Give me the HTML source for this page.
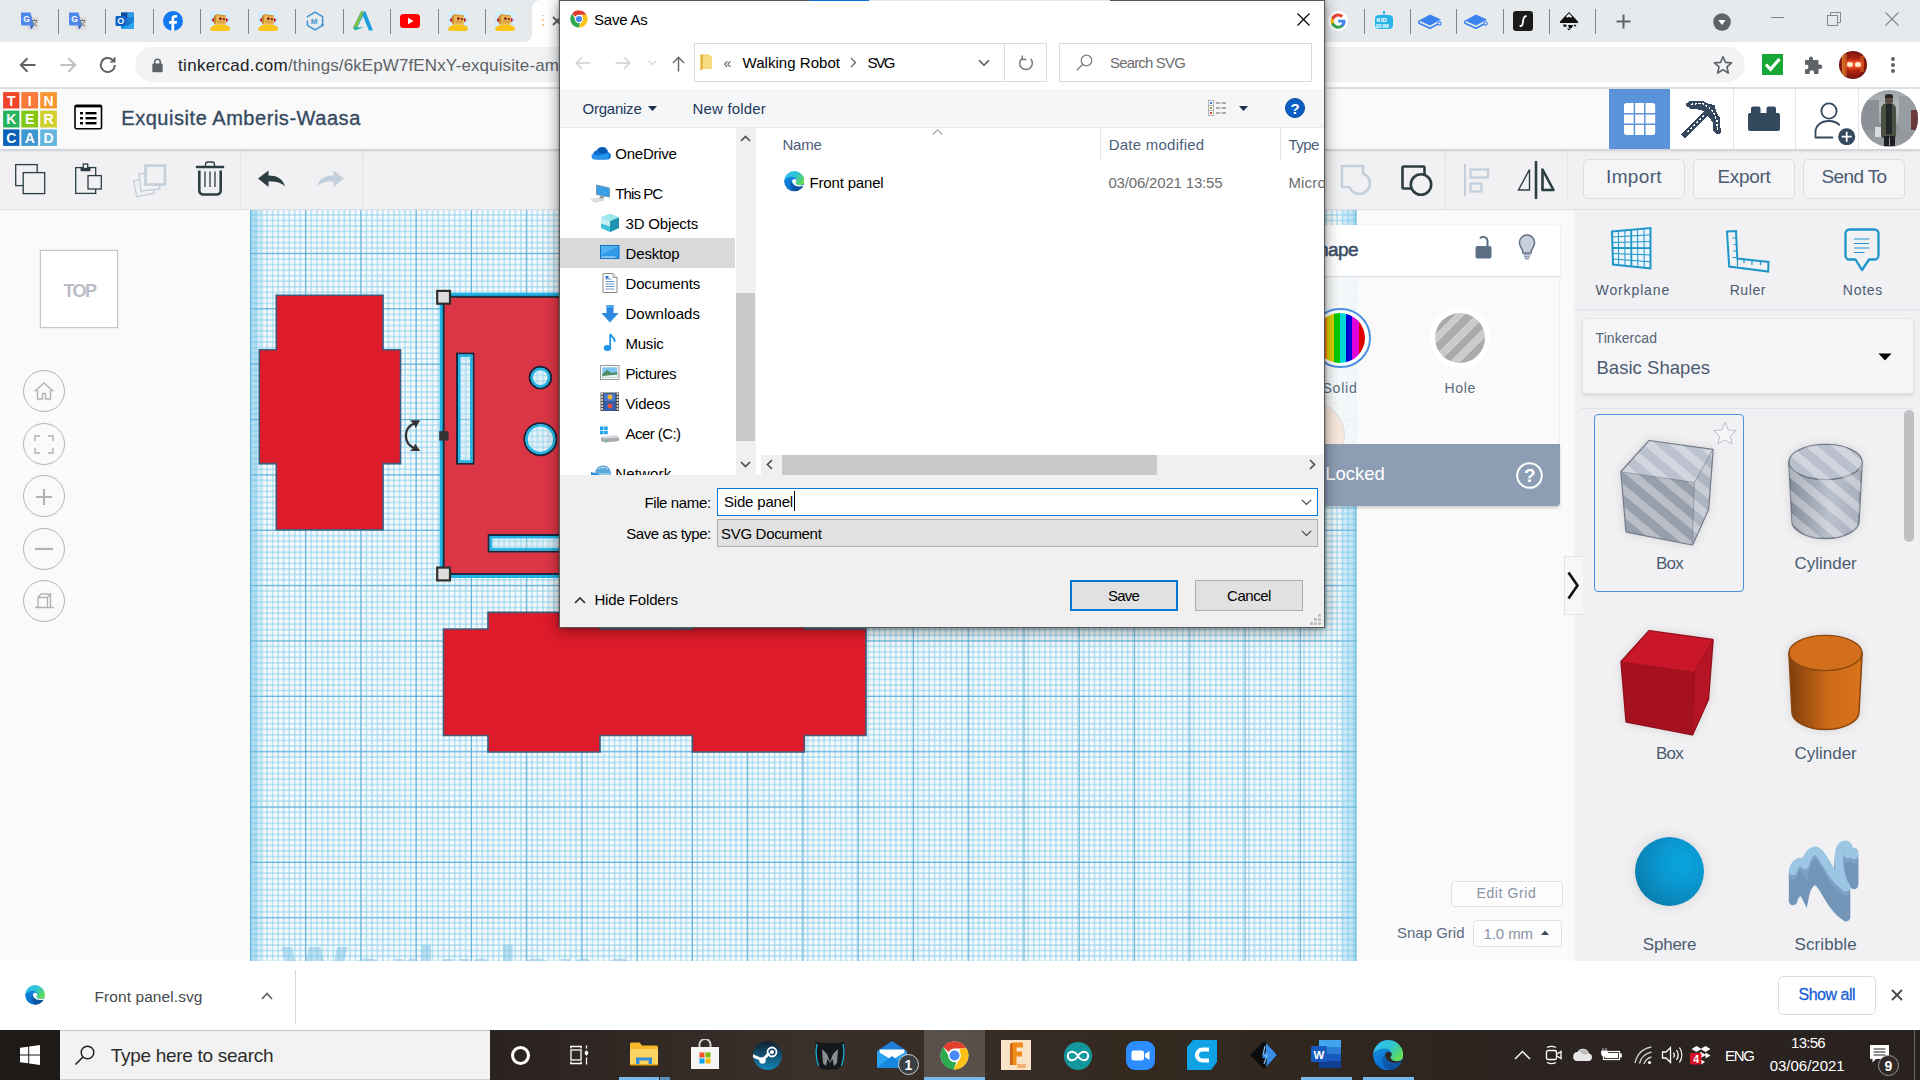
<!DOCTYPE html>
<html lang="en"><head><meta charset="utf-8"><title>Save As - Tinkercad</title>
<style>
html,body{margin:0;padding:0;}
body{width:1920px;height:1080px;overflow:hidden;position:relative;background:#fafafa;font-family:'Liberation Sans',sans-serif;}
.b{position:absolute;box-sizing:border-box;display:block;}
.t{position:absolute;white-space:pre;line-height:1;}
</style></head>
<body>
<div class="b" style="left:0px;top:210px;width:1920px;height:751px;background:#fafafa;"></div>
<div class="b" style="left:249.6px;top:209.5px;width:1107.4px;height:751.5px;background:#f6f8fa;overflow:hidden;"><div class="b" style="left:-3px;top:-3px;width:1113.4px;height:757.5px;background:linear-gradient(to right,rgba(70,155,202,.72) 0,rgba(70,155,202,.72) 1.3px,transparent 1.3px) 2.90px 0/55.275px 55.275px,linear-gradient(to bottom,rgba(70,155,202,.72) 0,rgba(70,155,202,.72) 1.3px,transparent 1.3px) 0 45.90px/55.38px 55.38px,linear-gradient(to right,rgba(125,205,236,.46) 0,rgba(125,205,236,.46) 1.7px,transparent 1.7px) 2.70px 0/5.5275px 5.5275px,linear-gradient(to bottom,rgba(125,205,236,.46) 0,rgba(125,205,236,.46) 1.7px,transparent 1.7px) 0 45.70px/5.538px 5.538px,#f6f8fa;filter:blur(.55px);"></div><div class="b" style="left:0;top:0;width:14px;height:100%;background:linear-gradient(to right,rgba(90,185,225,.55),rgba(120,200,235,.25) 70%,rgba(120,200,235,0))"></div><div class="b" style="left:1089.4px;top:0;width:18px;height:100%;background:linear-gradient(to left,rgba(110,195,230,.45),rgba(130,205,238,.3) 75%,rgba(130,205,238,0))"></div><span class="t" style="left:32px;top:727px;font-size:70px;font-weight:700;color:rgba(125,195,228,.5);">Workplane</span></div>
<svg class="b" style="left:0;top:0" width="1920" height="1080" viewBox="0 0 1920 1080"><g fill="#de1b2b" stroke="#3f5b7b" stroke-width="1.600" stroke-linejoin="miter"><path d="M276.300 295.300H383V349.700H400.500V463.600H383V529.700H276.300V463.600H259.300V349.700H276.300Z"/><path d="M443.500 629H488V612.400H600V629H692.400V612.400H804.400V629H866V735.500H804.400V752H692.400V735.500H600V752H488V735.500H443.500Z"/></g><g><rect x="441.600" y="294.800" width="142" height="281.200" fill="none" stroke="#22b4e6" stroke-width="4" style="filter:blur(.6px)"/><path fill-rule="evenodd" d="M443.900 297h140v276.800h-140zM457 353.600h16.500v110h-16.500zM488.700 535h120v16.500h-120zM551.200 377.600a10.800 10.800 0 1 0-21.600 0a10.800 10.800 0 1 0 21.600 0zM556.400 439.200a16 16 0 1 0-32 0a16 16 0 1 0 32 0z" fill="#dc3646"/><rect x="443.700" y="296.800" width="140" height="277.200" fill="none" stroke="#1d2f40" stroke-width="2"/><rect x="457" y="353.6" width="16.5" height="110" fill="rgba(190,225,240,.35)" stroke="#17293c" stroke-width="2"/><rect x="459.2" y="355.8" width="12.1" height="105.6" fill="none" stroke="#22b4e6" stroke-width="2.400"/><rect x="488.7" y="535" width="120" height="16.5" fill="rgba(190,225,240,.35)" stroke="#17293c" stroke-width="2"/><rect x="490.9" y="537.2" width="115.6" height="12.1" fill="none" stroke="#22b4e6" stroke-width="2.400"/><circle cx="540.4" cy="377.6" r="10.8" fill="rgba(190,225,240,.35)" stroke="#17293c" stroke-width="2"/><circle cx="540.4" cy="377.6" r="8.600000000000001" fill="none" stroke="#22b4e6" stroke-width="2.400"/><circle cx="540.4" cy="439.2" r="16" fill="rgba(190,225,240,.35)" stroke="#17293c" stroke-width="2"/><circle cx="540.4" cy="439.2" r="13.8" fill="none" stroke="#22b4e6" stroke-width="2.400"/></g><rect x="437.200" y="290.9" width="12.800" height="12.800" fill="#dedede" stroke="#2e2e2e" stroke-width="2.200"/><rect x="437.200" y="567.6" width="12.800" height="12.800" fill="#dedede" stroke="#2e2e2e" stroke-width="2.200"/><rect x="439.200" y="431.100" width="9.400" height="9.500" fill="#333"/><path d="M414.500 423.200c-11.500 5-11.500 20 0 25" fill="none" stroke="#333" stroke-width="2.300"/><path d="M410.200 420.300h10l-4.600 7.600-1.300-3.200z" fill="#333"/><path d="M410.200 451h10l-5.200-7.500-1 3.400z" fill="#333"/></svg>
<div class="b" style="left:40px;top:250px;width:78px;height:78px;background:#ffffff;border:1.500px solid #c6c6c9;box-shadow:0 0 2px rgba(0,0,0,.15);"></div>
<span class="t" style="left:63.50px;top:282px;font-size:18px;color:#b9bdc6;font-weight:700;letter-spacing:-1.562px;">TOP</span>
<div class="b" style="left:23px;top:370.3px;width:42px;height:42px;background:#fafafa;border:1px solid #b5b5b5;border-radius:50%;"></div>
<div class="b" style="left:23px;top:422.8px;width:42px;height:42px;background:#fafafa;border:1px solid #b5b5b5;border-radius:50%;"></div>
<div class="b" style="left:23px;top:475.3px;width:42px;height:42px;background:#fafafa;border:1px solid #b5b5b5;border-radius:50%;"></div>
<div class="b" style="left:23px;top:527.8px;width:42px;height:42px;background:#fafafa;border:1px solid #b5b5b5;border-radius:50%;"></div>
<div class="b" style="left:23px;top:580.2px;width:42px;height:42px;background:#fafafa;border:1px solid #b5b5b5;border-radius:50%;"></div>
<svg class="b" style="left:33px;top:381px;" width="22" height="20" viewBox="0 0 22 20"><path d="M1.500 10.500L11 2l9.500 8.500M4.500 9v9h5v-5.500h3V18h5V9" fill="none" stroke="#b3b3b3" stroke-width="1.400"/></svg>
<svg class="b" style="left:34px;top:434.5px;" width="20" height="19" viewBox="0 0 20 19"><path d="M1 6V1h5M14 1h5v5M19 13v5h-5M6 18H1v-5" fill="none" stroke="#b3b3b3" stroke-width="1.400"/></svg>
<svg class="b" style="left:35px;top:487.5px;" width="18" height="18" viewBox="0 0 18 18"><path d="M9 1v16M1 9h16" stroke="#b3b3b3" stroke-width="2.200"/></svg>
<svg class="b" style="left:35px;top:540px;" width="18" height="18" viewBox="0 0 18 18"><path d="M0 9h18" stroke="#b3b3b3" stroke-width="2.200"/></svg>
<svg class="b" style="left:33px;top:590px;" width="22" height="22" viewBox="0 0 22 22"><path d="M5 17V7.500l3-3.500h9.500v13M5 7.500h9.500l3-3.500M14.500 7.500V17M2 17.500h19" fill="none" stroke="#b3b3b3" stroke-width="1.400"/></svg>
<div class="b" style="left:1260px;top:224.8px;width:300px;height:52px;background:#ffffff;border-radius:4px 4px 0 0;border-bottom:1px solid #d5dde8;box-shadow:0 1px 3px rgba(0,0,0,.12);"></div>
<div class="b" style="left:1260px;top:277px;width:300px;height:167.5px;background:rgba(250,250,250,.9);border-right:1px solid #eceef2;"></div>
<span class="t" style="left:1306.00px;top:240px;font-size:19px;color:#3a4d63;letter-spacing:-0.591px;-webkit-text-stroke:.5px #3a4d63;">Shape</span>
<svg class="b" style="left:1474px;top:233px;" width="20" height="27" viewBox="0 0 20 27"><rect x="1.500" y="13" width="16" height="12.500" rx="2" fill="#5d6f85"/><path d="M13.500 13.500V8a4.200 4.200 0 0 0-7.500-2.500" fill="none" stroke="#5d6f85" stroke-width="2"/></svg>
<svg class="b" style="left:1516px;top:233px;" width="22" height="28" viewBox="0 0 22 28"><path d="M11 2a7.600 7.600 0 0 1 7.600 7.600c0 3.200-1.600 4.800-2.800 7-.500 1-.700 2.200-.800 3.400H7c-.100-1.200-.300-2.400-.800-3.400-1.200-2.200-2.800-3.800-2.800-7A7.600 7.600 0 0 1 11 2z" fill="#c9d0db" stroke="#5d6f85" stroke-width="1.500"/><path d="M7.500 21.700h7M8 23.800h6M9 25.800h4" stroke="#8f9db0" stroke-width="1.400"/></svg>
<div class="b" style="left:1310px;top:307.5px;width:60.6px;height:60.6px;background:#fff;border:2px solid #4a8fe0;border-radius:50%;"></div>
<div class="b" style="left:1315.3px;top:312.8px;width:50px;height:50px;border-radius:50%;background:linear-gradient(to right,#e00000 0.0%,#e00000 12.5%,#ff8c00 12.5%,#ff8c00 25.0%,#d8d000 25.0%,#d8d000 37.5%,#00c800 37.5%,#00c800 50.0%,#00d8d8 50.0%,#00d8d8 62.5%,#0000d8 62.5%,#0000d8 75.0%,#e000d8 75.0%,#e000d8 87.5%,#e00000 87.5%,#e00000 100.0%);"></div>
<div class="b" style="left:1429.3px;top:307px;width:61.4px;height:61.4px;background:#ffffff;border-radius:50%;"></div>
<div class="b" style="left:1435px;top:312.7px;width:50px;height:50px;border-radius:50%;background:repeating-linear-gradient(135deg,#cbcbcb 0,#cbcbcb 7.500px,#ababab 7.500px,#ababab 15px);"></div>
<span class="t" style="left:1322.50px;top:381px;font-size:14px;color:#5a6b80;letter-spacing:0.772px;">Solid</span>
<span class="t" style="left:1444.50px;top:381px;font-size:14px;color:#5a6b80;letter-spacing:0.676px;">Hole</span>
<div class="b" style="left:1276px;top:401px;width:69px;height:69px;background:rgba(246,226,212,.8);border-radius:50%;border:1px solid rgba(200,210,225,.6);"></div>
<div class="b" style="left:1260px;top:444.3px;width:300px;height:61.5px;background:#8d9eb4;border-radius:0 0 4px 4px;box-shadow:0 2px 3px rgba(0,0,0,.18);"></div>
<span class="t" style="left:1325.30px;top:465px;font-size:18.5px;color:#ffffff;letter-spacing:-0.026px;">Locked</span>
<svg class="b" style="left:1515px;top:461px;" width="29" height="29" viewBox="0 0 29 29"><circle cx="14.500" cy="14.500" r="12.300" fill="none" stroke="#fff" stroke-width="2"/></svg>
<span class="t" style="left:1524.00px;top:466px;font-size:19px;color:#fff;font-weight:700;">?</span>
<div class="b" style="left:1450.5px;top:880.5px;width:112px;height:26px;background:#fdfdfd;border:1px solid #dde2e9;border-radius:4px;"></div>
<span class="t" style="left:1476.50px;top:886px;font-size:14px;color:#8794a5;letter-spacing:0.615px;">Edit Grid</span>
<span class="t" style="left:1397.00px;top:925px;font-size:15px;color:#5a6b80;letter-spacing:-0.005px;">Snap Grid</span>
<div class="b" style="left:1473.4px;top:920.2px;width:89px;height:26.6px;background:#fdfdfd;border:1px solid #dde2e9;border-radius:4px;"></div>
<span class="t" style="left:1483.50px;top:926px;font-size:15px;color:#8794a5;letter-spacing:-0.086px;">1.0 mm</span>
<svg class="b" style="left:1540px;top:929px;" width="10" height="7" viewBox="0 0 10 7"><path d="M1 6l4-4.500L9 6z" fill="#3b4a5c"/></svg>
<div class="b" style="left:1575px;top:210px;width:345px;height:751px;background:#f1f1f4;box-shadow:0 0 2px rgba(0,0,0,.08);"></div>
<svg class="b" style="left:1610px;top:226px;" width="43" height="46" viewBox="0 0 43 46"><path d="M2 5.500L40.500 2v40.500L3 38.500z" fill="#eaf5fb" stroke="#1f95c8" stroke-width="2"/><path d="M8.4 4.9L8.6 39.2" stroke="#1f95c8" stroke-width="1"/><path d="M14.8 4.3L15.0 39.8" stroke="#1f95c8" stroke-width="1"/><path d="M21.2 3.8L21.4 40.5" stroke="#1f95c8" stroke-width="1.8"/><path d="M27.6 3.2L27.8 41.1" stroke="#1f95c8" stroke-width="1"/><path d="M34.0 2.6L34.2 41.8" stroke="#1f95c8" stroke-width="1"/><path d="M2.500 11.0L40.500 8.8" stroke="#1f95c8" stroke-width="1"/><path d="M2.500 16.5L40.500 15.5" stroke="#1f95c8" stroke-width="1"/><path d="M2.500 22.0L40.500 22.2" stroke="#1f95c8" stroke-width="1.8"/><path d="M2.500 27.5L40.500 29.0" stroke="#1f95c8" stroke-width="1"/><path d="M2.500 33.0L40.500 35.8" stroke="#1f95c8" stroke-width="1"/></svg>
<span class="t" style="left:1595.60px;top:283px;font-size:14px;color:#4b5b70;letter-spacing:0.870px;">Workplane</span>
<svg class="b" style="left:1725px;top:228px;" width="46" height="45" viewBox="0 0 46 45"><path d="M2 3.500l9-.500 1.300 27.500 31.200 3.500-.300 9.500L4.200 38.500z" fill="none" stroke="#1f95c8" stroke-width="2"/><path d="M7.500 10h3.500M8.500 16.500h3M8 23h3.500M7.500 29.500h4M19 31.500v3.500M27 32.500v4.500M35.500 33.500v3.500M12.500 31v7.500" stroke="#1f95c8" stroke-width="1.200"/></svg>
<span class="t" style="left:1729.70px;top:283px;font-size:14px;color:#4b5b70;letter-spacing:0.566px;">Ruler</span>
<svg class="b" style="left:1843px;top:227px;" width="38" height="46" viewBox="0 0 38 46"><path d="M6.500 2.500h25a4 4 0 0 1 4 4v22a4 4 0 0 1-4 4h-5.500l-7 10.500-6.500-10.500h-6a4 4 0 0 1-4-4v-22a4 4 0 0 1 4-4z" fill="none" stroke="#1f95c8" stroke-width="2.300" stroke-linejoin="round"/><path d="M11 12h15.500M11 16.500h15M11 21h15.500M11 25.500h10.500" stroke="#1f95c8" stroke-width="1.200"/></svg>
<span class="t" style="left:1842.80px;top:283px;font-size:14px;color:#4b5b70;letter-spacing:0.724px;">Notes</span>
<div class="b" style="left:1575px;top:308.5px;width:345px;height:1px;background:#dfe2e8;"></div>
<div class="b" style="left:1581.6px;top:317.5px;width:332px;height:76.6px;background:#f5f5f8;border:1px solid #e6e7ec;border-radius:4px;box-shadow:0 2px 3px rgba(0,0,0,.10);"></div>
<span class="t" style="left:1595.60px;top:331px;font-size:14px;color:#55657a;letter-spacing:0.050px;">Tinkercad</span>
<span class="t" style="left:1596.50px;top:359px;font-size:18.5px;color:#4b5b70;letter-spacing:0.031px;">Basic Shapes</span>
<svg class="b" style="left:1878px;top:353px;" width="14" height="8" viewBox="0 0 14 8"><path d="M0.500 0.500h13l-6.500 7z" fill="#000"/></svg>
<div class="b" style="left:1581px;top:408px;width:332px;height:1px;background:#dfe2e8;"></div>
<div class="b" style="left:1904.3px;top:409.5px;width:9.7px;height:132px;background:#bfbfc1;border-radius:5px;"></div>
<div class="b" style="left:1563.7px;top:556px;width:19.5px;height:58.5px;background:#f7f7f9;border:1px solid #e2e3e7;border-right:none;"></div>
<svg class="b" style="left:1566px;top:571px;" width="14" height="29" viewBox="0 0 14 29"><path d="M2.500 1.500L11.500 14.500 2.500 27.500" fill="none" stroke="#111" stroke-width="2.600"/></svg>
<div class="b" style="left:1594px;top:414px;width:149.7px;height:177.7px;background:#f1f1f4;border:1.500px solid #4a8fe0;border-radius:4px;"></div>
<svg class="b" style="left:1712px;top:421px;" width="26" height="25" viewBox="0 0 26 25"><path d="M13 1.500l3.300 7.400 8 .800-6 5.400 1.800 7.900L13 18.900 5.900 23l1.800-7.900-6-5.400 8-.800z" fill="#f6f6f9" stroke="#b9bec8" stroke-width="1"/></svg>
<svg class="b" style="left:1600px;top:420px;filter:drop-shadow(0 0 5px rgba(0,0,0,.12));" width="130" height="140" viewBox="0 0 130 140"><defs><pattern id="st1" width="17" height="17" patternUnits="userSpaceOnUse" patternTransform="rotate(40)"><rect width="17" height="17" fill="#fff" fill-opacity="0"/><rect width="17" height="8" fill="#fff" fill-opacity=".33"/></pattern></defs><polygon points="49.3,21.1 112.6,30.0 108.0,89.3 92.2,124.4 26.5,111.5 21.5,51.9" fill="#727986" stroke="#727986" stroke-width="2.400" stroke-linejoin="round"/><polygon points="49.3,21.1 112.6,30.0 94.4,62.4 21.5,51.9" fill="#bcc2cf"/><polygon points="21.5,51.9 94.4,62.4 92.2,124.4 26.5,111.5" fill="#979eac"/><polygon points="94.4,62.4 112.6,30.0 108.0,89.3 92.2,124.4" fill="#adb4c2"/><polygon points="49.3,21.1 112.6,30.0 108.0,89.3 92.2,124.4 26.5,111.5 21.5,51.9" fill="url(#st1)"/><polyline points="21.5,51.9 94.4,62.4 112.6,30.0" fill="none" stroke="#727986" stroke-width=".700" stroke-opacity=".7"/><polyline points="94.4,62.4 92.2,124.4" fill="none" stroke="#727986" stroke-width=".700" stroke-opacity=".7"/></svg>
<svg class="b" style="left:1760px;top:420px;filter:drop-shadow(0 0 5px rgba(0,0,0,.12));" width="130" height="140" viewBox="0 0 130 140"><defs><linearGradient id="cg1" x1="0" x2="1" y1="0" y2="0"><stop offset="0" stop-color="#848b98"/><stop offset=".55" stop-color="#bac0cd"/><stop offset="1" stop-color="#a8aebb"/></linearGradient><pattern id="cs1" width="17" height="17" patternUnits="userSpaceOnUse" patternTransform="rotate(40)"><rect width="17" height="8" fill="#fff" fill-opacity=".33"/></pattern></defs><path d="M28.9 42 L32.0 101 A33.500 17.500 0 0 0 99.0 101 L102.1 42 Z" fill="url(#cg1)" stroke="#727986" stroke-width="1.600"/><ellipse cx="65.5" cy="42" rx="36.600" ry="17.600" fill="#bac0cd" stroke="#727986" stroke-width="1.400"/><path d="M28.9 42 A36.600 17.600 0 0 1 102.1 42 L99.0 101 A33.500 17.500 0 0 1 32.0 101 Z" fill="url(#cs1)"/></svg>
<span class="t" style="left:1656.00px;top:555px;font-size:17px;color:#4b5b70;letter-spacing:-0.766px;">Box</span>
<span class="t" style="left:1794.60px;top:555px;font-size:17px;color:#4b5b70;letter-spacing:-0.032px;">Cylinder</span>
<svg class="b" style="left:1600px;top:610px;filter:drop-shadow(0 0 5px rgba(0,0,0,.12));" width="130" height="140" viewBox="0 0 130 140"><polygon points="49.3,21.1 112.6,30.0 108.0,89.3 92.2,124.4 26.5,111.5 21.5,51.9" fill="#8f0f1b" stroke="#8f0f1b" stroke-width="2.400" stroke-linejoin="round"/><polygon points="49.3,21.1 112.6,30.0 94.4,62.4 21.5,51.9" fill="#c91628"/><polygon points="21.5,51.9 94.4,62.4 92.2,124.4 26.5,111.5" fill="#a5111f"/><polygon points="94.4,62.4 112.6,30.0 108.0,89.3 92.2,124.4" fill="#b51424"/><polyline points="21.5,51.9 94.4,62.4 112.6,30.0" fill="none" stroke="#8f0f1b" stroke-width=".700" stroke-opacity=".7"/><polyline points="94.4,62.4 92.2,124.4" fill="none" stroke="#8f0f1b" stroke-width=".700" stroke-opacity=".7"/></svg>
<svg class="b" style="left:1760px;top:611px;filter:drop-shadow(0 0 5px rgba(0,0,0,.12));" width="130" height="140" viewBox="0 0 130 140"><defs><linearGradient id="cg2" x1="0" x2="1" y1="0" y2="0"><stop offset="0" stop-color="#7d3e0c"/><stop offset=".55" stop-color="#cf6a18"/><stop offset="1" stop-color="#d9741c"/></linearGradient></defs><path d="M28.9 42 L32.0 101 A33.500 17.500 0 0 0 99.0 101 L102.1 42 Z" fill="url(#cg2)" stroke="#8a470f" stroke-width="1.600"/><ellipse cx="65.5" cy="42" rx="36.600" ry="17.600" fill="#d36f1c" stroke="#8a470f" stroke-width="1.400"/></svg>
<span class="t" style="left:1656.00px;top:745px;font-size:17px;color:#4b5b70;letter-spacing:-0.766px;">Box</span>
<span class="t" style="left:1794.60px;top:745px;font-size:17px;color:#4b5b70;letter-spacing:-0.032px;">Cylinder</span>
<div class="b" style="left:1634.5px;top:836.6px;width:69.8px;height:69.8px;border-radius:50%;background:radial-gradient(circle at 68% 38%,#0aa5de 0%,#0a98d0 35%,#0b86b8 65%,#0a6f99 100%);box-shadow:0 0 14px rgba(0,0,0,.12);"></div>
<span class="t" style="left:1642.80px;top:936px;font-size:17px;color:#4b5b70;letter-spacing:-0.221px;">Sphere</span>
<svg class="b" style="left:1780px;top:835px;" width="90" height="95" viewBox="0 0 90 95"><g transform="translate(0 30)" fill="none" stroke="#7396b8" stroke-width="8.500" stroke-linecap="round"><path d="M13 36C15 27,22 24,25 30C27 20,33 13,38 17C45 22,50 42,66 52"/><path d="M66 52C58 40,56 12,64 10C68 9,70 14,68 19M74 17v3"/></g><g transform="translate(0 28)" fill="none" stroke="#7396b8" stroke-width="8.500" stroke-linecap="round"><path d="M13 36C15 27,22 24,25 30C27 20,33 13,38 17C45 22,50 42,66 52"/><path d="M66 52C58 40,56 12,64 10C68 9,70 14,68 19M74 17v3"/></g><g transform="translate(0 26)" fill="none" stroke="#7396b8" stroke-width="8.500" stroke-linecap="round"><path d="M13 36C15 27,22 24,25 30C27 20,33 13,38 17C45 22,50 42,66 52"/><path d="M66 52C58 40,56 12,64 10C68 9,70 14,68 19M74 17v3"/></g><g transform="translate(0 24)" fill="none" stroke="#7396b8" stroke-width="8.500" stroke-linecap="round"><path d="M13 36C15 27,22 24,25 30C27 20,33 13,38 17C45 22,50 42,66 52"/><path d="M66 52C58 40,56 12,64 10C68 9,70 14,68 19M74 17v3"/></g><g transform="translate(0 22)" fill="none" stroke="#7396b8" stroke-width="8.500" stroke-linecap="round"><path d="M13 36C15 27,22 24,25 30C27 20,33 13,38 17C45 22,50 42,66 52"/><path d="M66 52C58 40,56 12,64 10C68 9,70 14,68 19M74 17v3"/></g><g transform="translate(0 20)" fill="none" stroke="#7396b8" stroke-width="8.500" stroke-linecap="round"><path d="M13 36C15 27,22 24,25 30C27 20,33 13,38 17C45 22,50 42,66 52"/><path d="M66 52C58 40,56 12,64 10C68 9,70 14,68 19M74 17v3"/></g><g transform="translate(0 18)" fill="none" stroke="#7396b8" stroke-width="8.500" stroke-linecap="round"><path d="M13 36C15 27,22 24,25 30C27 20,33 13,38 17C45 22,50 42,66 52"/><path d="M66 52C58 40,56 12,64 10C68 9,70 14,68 19M74 17v3"/></g><g transform="translate(0 16)" fill="none" stroke="#7396b8" stroke-width="8.500" stroke-linecap="round"><path d="M13 36C15 27,22 24,25 30C27 20,33 13,38 17C45 22,50 42,66 52"/><path d="M66 52C58 40,56 12,64 10C68 9,70 14,68 19M74 17v3"/></g><g transform="translate(0 14)" fill="none" stroke="#7396b8" stroke-width="8.500" stroke-linecap="round"><path d="M13 36C15 27,22 24,25 30C27 20,33 13,38 17C45 22,50 42,66 52"/><path d="M66 52C58 40,56 12,64 10C68 9,70 14,68 19M74 17v3"/></g><g transform="translate(0 12)" fill="none" stroke="#7396b8" stroke-width="8.500" stroke-linecap="round"><path d="M13 36C15 27,22 24,25 30C27 20,33 13,38 17C45 22,50 42,66 52"/><path d="M66 52C58 40,56 12,64 10C68 9,70 14,68 19M74 17v3"/></g><g transform="translate(0 10)" fill="none" stroke="#7396b8" stroke-width="8.500" stroke-linecap="round"><path d="M13 36C15 27,22 24,25 30C27 20,33 13,38 17C45 22,50 42,66 52"/><path d="M66 52C58 40,56 12,64 10C68 9,70 14,68 19M74 17v3"/></g><g transform="translate(0 8)" fill="none" stroke="#7396b8" stroke-width="8.500" stroke-linecap="round"><path d="M13 36C15 27,22 24,25 30C27 20,33 13,38 17C45 22,50 42,66 52"/><path d="M66 52C58 40,56 12,64 10C68 9,70 14,68 19M74 17v3"/></g><g transform="translate(0 6)" fill="none" stroke="#7396b8" stroke-width="8.500" stroke-linecap="round"><path d="M13 36C15 27,22 24,25 30C27 20,33 13,38 17C45 22,50 42,66 52"/><path d="M66 52C58 40,56 12,64 10C68 9,70 14,68 19M74 17v3"/></g><g transform="translate(0 4)" fill="none" stroke="#7da2c4" stroke-width="8.500" stroke-linecap="round"><path d="M13 36C15 27,22 24,25 30C27 20,33 13,38 17C45 22,50 42,66 52"/><path d="M66 52C58 40,56 12,64 10C68 9,70 14,68 19M74 17v3"/></g><g transform="translate(0 2)" fill="none" stroke="#7da2c4" stroke-width="8.500" stroke-linecap="round"><path d="M13 36C15 27,22 24,25 30C27 20,33 13,38 17C45 22,50 42,66 52"/><path d="M66 52C58 40,56 12,64 10C68 9,70 14,68 19M74 17v3"/></g><g fill="none" stroke="#9dc5e4" stroke-width="8.500" stroke-linecap="round" stroke-linejoin="round"><path d="M13 36C15 27,22 24,25 30C27 20,33 13,38 17C45 22,50 42,66 52"/><path d="M66 52C58 40,56 12,64 10C68 9,70 14,68 19M74 17v3"/></g></svg>
<span class="t" style="left:1794.60px;top:936px;font-size:17px;color:#4b5b70;letter-spacing:0.085px;">Scribble</span>
<div class="b" style="left:0px;top:150px;width:1920px;height:60px;background:#f1f1f4;border-bottom:1px solid #dddfe4;"></div>
<svg class="b" style="left:14px;top:163px;" width="32" height="32" viewBox="0 0 32 32"><rect x="1.700" y="1.600" width="21.500" height="21" fill="#f1f1f4" stroke="#2c3e42" stroke-width="1.300"/><rect x="9.200" y="9.600" width="21.500" height="21" fill="#f1f1f4" stroke="#2c3e42" stroke-width="1.300"/></svg>
<svg class="b" style="left:74px;top:162px;" width="30" height="33" viewBox="0 0 30 33"><rect x="1.700" y="5.600" width="20" height="25.800" fill="#f1f1f4" stroke="#2c3e42" stroke-width="1.300"/><path d="M6.500 5.500h10v2.800a1 1 0 0 1-1 1h-8a1 1 0 0 1-1-1z" fill="#2c3e42"/><rect x="9.300" y="2" width="4.400" height="4.500" fill="#f1f1f4" stroke="#2c3e42" stroke-width="1.300"/><rect x="14" y="13.600" width="13.300" height="13.400" fill="#f1f1f4" stroke="#2c3e42" stroke-width="1.300"/></svg>
<svg class="b" style="left:132px;top:162px;" width="36" height="36" viewBox="0 0 36 36"><g fill="#f1f1f4" stroke="#c3cfdb"><rect x="3" y="17" width="18" height="16" stroke-width="1.200" transform="rotate(-12 12 25)"/><rect x="8" y="11" width="19" height="17" stroke-width="1.400" transform="rotate(-6 17 20)"/><rect x="13.500" y="3.500" width="19.500" height="19" stroke-width="2.600"/></g></svg>
<svg class="b" style="left:195px;top:160px;" width="30" height="37" viewBox="0 0 30 37"><path d="M2 7h26" stroke="#2c3e42" stroke-width="2.600" stroke-linecap="round"/><path d="M10.500 6V4.500a2.500 2.500 0 0 1 2.500-2.500h4a2.500 2.500 0 0 1 2.500 2.500V6" stroke="#2c3e42" stroke-width="1.300" fill="none"/><path d="M4.300 10.500v20a4 4 0 0 0 4 4h13.400a4 4 0 0 0 4-4v-20" stroke="#2c3e42" stroke-width="2.600" fill="none"/><path d="M10 11.500v15.500M15 11.500v15.500M20 11.500v15.500" stroke="#2c3e42" stroke-width="1.300"/></svg>
<div class="b" style="left:240px;top:150px;width:1px;height:59px;background:#e3e4e8;"></div>
<svg class="b" style="left:256px;top:168px;" width="31" height="22" viewBox="0 0 31 22"><path d="M2 10.500L12.500 2.500v5c8 0 14.500 3 16.500 11-3.500-4-9-5.500-16.500-5v5.500z" fill="#2c3e42"/></svg>
<svg class="b" style="left:315px;top:168px;" width="31" height="22" viewBox="0 0 31 22"><path d="M29 10.500L18.500 2.500v5c-8 0-14.500 3-16.500 11 3.500-4 9-5.500 16.500-5v5.500z" fill="#c3cfdb"/></svg>
<div class="b" style="left:362px;top:150px;width:1px;height:59px;background:#e3e4e8;"></div>
<svg class="b" style="left:1339px;top:164px;" width="34" height="32" viewBox="0 0 34 32"><path d="M3 2h21v7.500a10.500 10.500 0 1 1-13.500 13.500H3z" fill="none" stroke="#c3cfdb" stroke-width="2.600" stroke-linejoin="round"/></svg>
<svg class="b" style="left:1400px;top:164px;" width="34" height="32" viewBox="0 0 34 32"><rect x="2.500" y="2.500" width="22" height="22" rx="1" fill="none" stroke="#2c3e42" stroke-width="2.600"/><circle cx="21" cy="20.500" r="10.200" fill="#f1f1f4" stroke="#2c3e42" stroke-width="2.600"/></svg>
<div class="b" style="left:1445px;top:150px;width:1px;height:59px;background:#e3e4e8;"></div>
<svg class="b" style="left:1463px;top:164px;" width="28" height="32" viewBox="0 0 28 32"><path d="M2 0v32" stroke="#c3cfdb" stroke-width="2.200"/><rect x="7.500" y="5.500" width="17.500" height="8" fill="none" stroke="#c3cfdb" stroke-width="2.200"/><rect x="7.500" y="19.500" width="11" height="8" fill="none" stroke="#c3cfdb" stroke-width="2.200"/></svg>
<svg class="b" style="left:1516px;top:161px;" width="40" height="38" viewBox="0 0 40 38"><path d="M20 1v36" stroke="#2c3e42" stroke-width="2.600" stroke-linecap="round"/><path d="M13.500 8.500v20.500H2.500z" fill="none" stroke="#2c3e42" stroke-width="1.400"/><path d="M26.500 8.500v20.500h11z" fill="none" stroke="#2c3e42" stroke-width="2.600" stroke-linejoin="round"/></svg>
<div class="b" style="left:1566.5px;top:150px;width:1px;height:48px;background:#e3e4e8;"></div>
<div class="b" style="left:1583.0px;top:159px;width:101.5px;height:39.5px;background:#f5f5f8;border:1px solid #dcdde2;border-radius:5px;"></div>
<span class="t" style="left:1606.00px;top:167px;font-size:19px;color:#4b5b70;letter-spacing:0.357px;">Import</span>
<div class="b" style="left:1693.0px;top:159px;width:101.5px;height:39.5px;background:#f5f5f8;border:1px solid #dcdde2;border-radius:5px;"></div>
<span class="t" style="left:1717.50px;top:167px;font-size:19px;color:#4b5b70;letter-spacing:-0.320px;">Export</span>
<div class="b" style="left:1803.0px;top:159px;width:101.5px;height:39.5px;background:#f5f5f8;border:1px solid #dcdde2;border-radius:5px;"></div>
<span class="t" style="left:1821.50px;top:167px;font-size:19px;color:#4b5b70;letter-spacing:-0.627px;">Send To</span>
<div class="b" style="left:0px;top:89px;width:1920px;height:60px;background:#fafafb;box-shadow:0 1px 3px rgba(60,70,90,.35);"></div>
<svg class="b" style="left:0px;top:89px;" width="60" height="60" viewBox="0 0 60 60"><rect x="3.1" y="3.1" width="16.3" height="16.4" fill="#f0452a"/><rect x="21.3" y="3.1" width="16.8" height="16.4" fill="#f6793a"/><rect x="40.2" y="3.1" width="16.7" height="16.4" fill="#f7962f"/><rect x="3.1" y="21.6" width="16.3" height="16.9" fill="#27b35c"/><rect x="21.3" y="21.6" width="16.8" height="16.9" fill="#85c814"/><rect x="40.2" y="21.6" width="16.7" height="16.9" fill="#d0cf2f"/><rect x="3.1" y="40.4" width="16.3" height="16.5" fill="#0a5fb7"/><rect x="21.3" y="40.4" width="16.8" height="16.5" fill="#3f97cf"/><rect x="40.2" y="40.4" width="16.7" height="16.5" fill="#64b5e0"/></svg>
<span class="t" style="left:3.10px;top:94px;width:16.3px;text-align:center;font-size:14px;font-weight:700;color:#fff;">T</span>
<span class="t" style="left:21.30px;top:94px;width:16.8px;text-align:center;font-size:14px;font-weight:700;color:#fff;">I</span>
<span class="t" style="left:40.20px;top:94px;width:16.7px;text-align:center;font-size:14px;font-weight:700;color:#fff;">N</span>
<span class="t" style="left:3.10px;top:112px;width:16.3px;text-align:center;font-size:14px;font-weight:700;color:#fff;">K</span>
<span class="t" style="left:21.30px;top:112px;width:16.8px;text-align:center;font-size:14px;font-weight:700;color:#fff;">E</span>
<span class="t" style="left:40.20px;top:112px;width:16.7px;text-align:center;font-size:14px;font-weight:700;color:#fff;">R</span>
<span class="t" style="left:3.10px;top:131px;width:16.3px;text-align:center;font-size:14px;font-weight:700;color:#fff;">C</span>
<span class="t" style="left:21.30px;top:131px;width:16.8px;text-align:center;font-size:14px;font-weight:700;color:#fff;">A</span>
<span class="t" style="left:40.20px;top:131px;width:16.7px;text-align:center;font-size:14px;font-weight:700;color:#fff;">D</span>
<svg class="b" style="left:74px;top:104px;" width="29" height="26" viewBox="0 0 29 26"><rect x="1" y="1.200" width="26.500" height="23.500" rx="1.500" fill="#fff" stroke="#000" stroke-width="1.600"/><rect x="1" y="1.200" width="26.500" height="2.200" fill="#000"/><rect x="6" y="8" width="3" height="2.400" fill="#000"/><rect x="11.500" y="8" width="11" height="2.400" fill="#000"/><rect x="6" y="13" width="3" height="2.400" fill="#000"/><rect x="11.500" y="13" width="11" height="2.400" fill="#000"/><rect x="6" y="18" width="3" height="2.400" fill="#000"/><rect x="11.500" y="18" width="11" height="2.400" fill="#000"/></svg>
<span class="t" style="left:121.30px;top:108px;font-size:20px;color:#34495e;letter-spacing:0.538px;-webkit-text-stroke:0.35px #34495e;">Exquisite Amberis-Waasa</span>
<div class="b" style="left:1609px;top:89px;width:61px;height:60px;background:#5a93d9;"></div>
<svg class="b" style="left:1623.8px;top:103px;" width="32" height="32" viewBox="0 0 32 32"><rect x="0" y="0" width="31.200" height="32" rx="2.800" fill="#fff"/><path d="M10.400 0v32M20.800 0v32M0 10.700h32M0 21.300h32" stroke="#5a93d9" stroke-width="1.500"/></svg>
<div class="b" style="left:1670px;top:89px;width:63px;height:60px;background:#ffffff;"></div>
<div class="b" style="left:1733px;top:89px;width:1px;height:60px;background:#e4e6ea;"></div>
<div class="b" style="left:1734px;top:89px;width:61px;height:60px;background:#ffffff;"></div>
<div class="b" style="left:1795px;top:89px;width:1px;height:60px;background:#e4e6ea;"></div>
<div class="b" style="left:1796px;top:89px;width:62px;height:60px;background:#ffffff;"></div>
<div class="b" style="left:1858px;top:89px;width:1px;height:60px;background:#e4e6ea;"></div>
<div class="b" style="left:1859px;top:89px;width:61px;height:60px;background:#ffffff;"></div>
<svg class="b" style="left:1680px;top:98.3px;shape-rendering:crispEdges;" width="44" height="42" viewBox="0 0 44 42"><polygon points="5.8,5.8 10.8,2.5 21.7,2.5 26.7,5.0 35.0,7.5 35.8,13.3 40.0,20.0 40.8,35.0 36.7,36.7 33.3,33.3 33.3,25.0 28.3,18.3 23.3,13.3 20.0,11.7 10.8,10.8 6.7,8.3" fill="#34495e"/><polyline points="10.8,6.3 21.7,5.3 29.2,9.2 33.3,14.2 37.0,22.5 37.3,33.3" fill="none" stroke="#fff" stroke-width="1.300" stroke-dasharray="2.200 1.600"/><path d="M5.200 36.500L27 14.800" stroke="#34495e" stroke-width="5.400" stroke-linecap="square"/><path d="M7.500 34.200L25 16.800" stroke="#fff" stroke-width="1.300" stroke-dasharray="2.200 2"/></svg>
<svg class="b" style="left:1747px;top:105.3px;" width="35" height="27" viewBox="0 0 35 27"><path d="M4 8V3.500a2 2 0 0 1 2-2h5.500a2 2 0 0 1 2 2V8h6V3.500a2 2 0 0 1 2-2H27a2 2 0 0 1 2 2V8h2a2 2 0 0 1 2 2v14a2 2 0 0 1-2 2H3a2 2 0 0 1-2-2V10a2 2 0 0 1 2-2z" fill="#34495e"/></svg>
<svg class="b" style="left:1811.5px;top:99px;" width="44" height="46" viewBox="0 0 44 46"><circle cx="17" cy="12" r="7.600" fill="none" stroke="#34495e" stroke-width="1.800"/><path d="M3.500 38.500v-5.500c0-6 5-11 13.500-11 4.500 0 8 1.500 10.300 3.800M3.500 38.500h17" fill="none" stroke="#34495e" stroke-width="1.800" stroke-linecap="round"/><circle cx="34.700" cy="37.700" r="8.500" fill="#34495e"/><path d="M34.700 32.700v10M29.700 37.700h10" stroke="#fff" stroke-width="1.800"/></svg>
<div class="b" style="left:1860.8px;top:89.6px;width:57.4px;height:57.4px;background:linear-gradient(to bottom,#9ea4a9 0%,#b4b9bd 30%,#a3a8ac 55%,#8d9297 62%,#9b9fa3 100%);border-radius:50%;overflow:hidden;"><div class="b" style="left:0;top:10px;width:18px;height:30px;background:#8a9096"></div><div class="b" style="left:38px;top:6px;width:20px;height:36px;background:#969ca1"></div><div class="b" style="left:50px;top:20px;width:8px;height:20px;background:#6b3a3a"></div><div class="b" style="left:20.500px;top:13px;width:15px;height:35px;background:#4c5042;border-radius:6px 6px 3px 3px"></div><div class="b" style="left:25px;top:14px;width:6px;height:30px;background:#23262a"></div><div class="b" style="left:24.500px;top:5.500px;width:7.500px;height:9px;background:#5b4a40;border-radius:45%"></div><div class="b" style="left:24px;top:4.500px;width:8.500px;height:4px;background:#2a2422;border-radius:50% 50% 0 0"></div><div class="b" style="left:23.500px;top:46px;width:4.500px;height:10px;background:#1d1f23"></div><div class="b" style="left:29.500px;top:46px;width:4.500px;height:10px;background:#1d1f23"></div><div class="b" style="left:14px;top:37px;width:6px;height:10px;background:#d9dbdd"></div></div>
<div class="b" style="left:0px;top:0px;width:1920px;height:42px;background:#e7eaed;"></div>
<svg class="b" style="left:522.5px;top:0" width="60" height="42" viewBox="0 0 60 42"><path d="M0 42c6 0 9-3 9-9V9c0-5 3.500-9 9-9h42v42z" fill="#fff"/></svg>
<div class="b" style="left:58px;top:9px;width:1px;height:25px;background:#80868b;"></div>
<div class="b" style="left:105px;top:9px;width:1px;height:25px;background:#80868b;"></div>
<div class="b" style="left:153px;top:9px;width:1px;height:25px;background:#80868b;"></div>
<div class="b" style="left:200px;top:9px;width:1px;height:25px;background:#80868b;"></div>
<div class="b" style="left:248px;top:9px;width:1px;height:25px;background:#80868b;"></div>
<div class="b" style="left:295px;top:9px;width:1px;height:25px;background:#80868b;"></div>
<div class="b" style="left:343px;top:9px;width:1px;height:25px;background:#80868b;"></div>
<div class="b" style="left:390px;top:9px;width:1px;height:25px;background:#80868b;"></div>
<div class="b" style="left:438px;top:9px;width:1px;height:25px;background:#80868b;"></div>
<div class="b" style="left:485px;top:9px;width:1px;height:25px;background:#80868b;"></div>
<div class="b" style="left:1364px;top:9px;width:1px;height:25px;background:#80868b;"></div>
<div class="b" style="left:1410px;top:9px;width:1px;height:25px;background:#80868b;"></div>
<div class="b" style="left:1456px;top:9px;width:1px;height:25px;background:#80868b;"></div>
<div class="b" style="left:1503px;top:9px;width:1px;height:25px;background:#80868b;"></div>
<div class="b" style="left:1549px;top:9px;width:1px;height:25px;background:#80868b;"></div>
<div class="b" style="left:1595px;top:9px;width:1px;height:25px;background:#80868b;"></div>
<svg class="b" style="left:19.6px;top:11px;" width="20" height="20" viewBox="0 0 20 20"><rect x="7" y="6" width="12" height="13" rx="1.5" fill="#dcdcdc"/>
<path d="M1 1.5h9.5l3.5 13H2.5A1.5 1.5 0 0 1 1 13z" fill="#4f86ec"/>
<path d="M10 14.5h4l-3 4z" fill="#3a5bbf"/>
<text x="3.2" y="11" font-family="Liberation Sans,sans-serif" font-size="8.5" font-weight="700" fill="#fff">G</text>
<path d="M12 9.5h5.5M14.7 8.3v1.2M13 11c.8 2 2.2 3.2 4 4M16.5 9.7c-.5 2.3-1.8 4-3.7 5.2" stroke="#6b6b6b" stroke-width=".9" fill="none"/></svg>
<svg class="b" style="left:67.7px;top:11px;" width="20" height="20" viewBox="0 0 20 20"><rect x="7" y="6" width="12" height="13" rx="1.5" fill="#dcdcdc"/>
<path d="M1 1.5h9.5l3.5 13H2.5A1.5 1.5 0 0 1 1 13z" fill="#4f86ec"/>
<path d="M10 14.5h4l-3 4z" fill="#3a5bbf"/>
<text x="3.2" y="11" font-family="Liberation Sans,sans-serif" font-size="8.5" font-weight="700" fill="#fff">G</text>
<path d="M12 9.5h5.5M14.7 8.3v1.2M13 11c.8 2 2.2 3.2 4 4M16.5 9.7c-.5 2.3-1.8 4-3.7 5.2" stroke="#6b6b6b" stroke-width=".9" fill="none"/></svg>
<svg class="b" style="left:114.8px;top:11px;" width="20" height="20" viewBox="0 0 20 20"><rect x="6" y="1.5" width="13" height="15" rx="1" fill="#1a6fc9"/>
<rect x="6" y="1.5" width="6.5" height="5" fill="#0f4f9e"/><rect x="12.5" y="1.5" width="6.5" height="5" fill="#2f9be8"/>
<rect x="12.5" y="6.5" width="6.5" height="5" fill="#1d7fd6"/>
<path d="M6 10l7 5 6-4.5V17a1 1 0 0 1-1 1H7a1 1 0 0 1-1-1z" fill="#1492e6"/>
<path d="M19 10.5V17a1 1 0 0 1-1 1H8z" fill="#2aa7f0"/>
<rect x="0.5" y="5" width="10" height="10" rx="1" fill="#0a63c4"/>
<text x="2.3" y="13.3" font-family="Liberation Sans,sans-serif" font-size="9" font-weight="700" fill="#fff">O</text></svg>
<svg class="b" style="left:163px;top:11px;" width="20" height="20" viewBox="0 0 20 20"><circle cx="10" cy="10" r="10" fill="#1278f2"/>
<path d="M11.2 20v-7.2h2.4l.45-2.9H11.2V8.1c0-.85.3-1.5 1.6-1.5h1.4V4.1c-.3-.05-1.15-.15-2.15-.15-2.2 0-3.6 1.3-3.6 3.7v2.25H6v2.9h2.45V20z" fill="#fff"/></svg>
<svg class="b" style="left:210px;top:11px;" width="20" height="20" viewBox="0 0 20 20"><rect x="0" y="0" width="20" height="20" rx="2.600" fill="#d4eefb"/>
<path d="M0.300 9h3M17 9h2.700" stroke="#a9b5bd" stroke-width=".9"/>
<ellipse cx="3.300" cy="9" rx="1.100" ry="2.100" fill="#c4161c"/><ellipse cx="16.600" cy="9" rx="1" ry="2.100" fill="#c4161c"/>
<path d="M3.600 5.600L6 3.300V13.700L4.200 13z" fill="#c48a32"/>
<path d="M6 3.300l9.800 1.200v9.300H6z" fill="#eab552"/>
<path d="M6 3.300l9.800 1.200v.9L6 4.300z" fill="#c9952f"/>
<circle cx="10.400" cy="7.700" r="1.350" fill="#8e1b1b"/><circle cx="13.900" cy="8.200" r="1.150" fill="#8e1b1b"/>
<path d="M7.600 10.600l6.600.500" stroke="#b5832f" stroke-width=".8"/>
<path d="M0.100 17.300C2 14.500 6 13.600 10 13.600c5 0 9 1.400 9.900 3v1.400a2 2 0 0 1-2 2H2.100a2 2 0 0 1-2-2z" fill="#fcc419"/></svg>
<svg class="b" style="left:258px;top:11px;" width="20" height="20" viewBox="0 0 20 20"><rect x="0" y="0" width="20" height="20" rx="2.600" fill="#d4eefb"/>
<path d="M0.300 9h3M17 9h2.700" stroke="#a9b5bd" stroke-width=".9"/>
<ellipse cx="3.300" cy="9" rx="1.100" ry="2.100" fill="#c4161c"/><ellipse cx="16.600" cy="9" rx="1" ry="2.100" fill="#c4161c"/>
<path d="M3.600 5.600L6 3.300V13.700L4.200 13z" fill="#c48a32"/>
<path d="M6 3.300l9.800 1.200v9.300H6z" fill="#eab552"/>
<path d="M6 3.300l9.800 1.200v.9L6 4.300z" fill="#c9952f"/>
<circle cx="10.400" cy="7.700" r="1.350" fill="#8e1b1b"/><circle cx="13.900" cy="8.200" r="1.150" fill="#8e1b1b"/>
<path d="M7.600 10.600l6.600.500" stroke="#b5832f" stroke-width=".8"/>
<path d="M0.100 17.300C2 14.500 6 13.600 10 13.600c5 0 9 1.400 9.900 3v1.400a2 2 0 0 1-2 2H2.100a2 2 0 0 1-2-2z" fill="#fcc419"/></svg>
<svg class="b" style="left:305px;top:11px;" width="20" height="20" viewBox="0 0 20 20"><path d="M10 1.2l7.6 4.4v8.8L10 18.8l-7.6-4.4V5.6z" fill="none" stroke="#3a94d6" stroke-width="1.5" stroke-dasharray="40 3 6 0"/>
<text x="5.7" y="13.2" font-family="Liberation Sans,sans-serif" font-size="8" font-weight="700" fill="#3a94d6">M</text>
<circle cx="17.6" cy="14" r="1.3" fill="#3a94d6"/></svg>
<svg class="b" style="left:353px;top:11px;" width="20" height="20" viewBox="0 0 20 20"><path d="M0 17L8 0.5h4.5L20 19.5h-4.2L10 5 4 17z" fill="#1f9fdc"/>
<path d="M0 17L8 .5h3L4.2 16z" fill="#7cc243"/>
<path d="M0 17l2.3 2.5 8.5-3.2H4.2z" fill="#2bb6a8"/></svg>
<svg class="b" style="left:400px;top:11px;" width="20" height="20" viewBox="0 0 20 20"><rect x="0" y="3" width="20" height="14" rx="3.5" fill="#ff0000"/><path d="M8 6.8v6.4l5.5-3.2z" fill="#fff"/></svg>
<svg class="b" style="left:448px;top:11px;" width="20" height="20" viewBox="0 0 20 20"><rect x="0" y="0" width="20" height="20" rx="2.600" fill="#d4eefb"/>
<path d="M0.300 9h3M17 9h2.700" stroke="#a9b5bd" stroke-width=".9"/>
<ellipse cx="3.300" cy="9" rx="1.100" ry="2.100" fill="#c4161c"/><ellipse cx="16.600" cy="9" rx="1" ry="2.100" fill="#c4161c"/>
<path d="M3.600 5.600L6 3.300V13.700L4.200 13z" fill="#c48a32"/>
<path d="M6 3.300l9.800 1.200v9.300H6z" fill="#eab552"/>
<path d="M6 3.300l9.800 1.200v.9L6 4.300z" fill="#c9952f"/>
<circle cx="10.400" cy="7.700" r="1.350" fill="#8e1b1b"/><circle cx="13.900" cy="8.200" r="1.150" fill="#8e1b1b"/>
<path d="M7.600 10.600l6.600.500" stroke="#b5832f" stroke-width=".8"/>
<path d="M0.100 17.300C2 14.500 6 13.600 10 13.600c5 0 9 1.400 9.900 3v1.400a2 2 0 0 1-2 2H2.100a2 2 0 0 1-2-2z" fill="#fcc419"/></svg>
<svg class="b" style="left:495px;top:11px;" width="20" height="20" viewBox="0 0 20 20"><rect x="0" y="0" width="20" height="20" rx="2.600" fill="#d4eefb"/>
<path d="M0.300 9h3M17 9h2.700" stroke="#a9b5bd" stroke-width=".9"/>
<ellipse cx="3.300" cy="9" rx="1.100" ry="2.100" fill="#c4161c"/><ellipse cx="16.600" cy="9" rx="1" ry="2.100" fill="#c4161c"/>
<path d="M3.600 5.600L6 3.300V13.700L4.200 13z" fill="#c48a32"/>
<path d="M6 3.300l9.800 1.200v9.300H6z" fill="#eab552"/>
<path d="M6 3.300l9.800 1.200v.9L6 4.300z" fill="#c9952f"/>
<circle cx="10.400" cy="7.700" r="1.350" fill="#8e1b1b"/><circle cx="13.900" cy="8.200" r="1.150" fill="#8e1b1b"/>
<path d="M7.600 10.600l6.600.500" stroke="#b5832f" stroke-width=".8"/>
<path d="M0.100 17.300C2 14.500 6 13.600 10 13.600c5 0 9 1.400 9.900 3v1.400a2 2 0 0 1-2 2H2.100a2 2 0 0 1-2-2z" fill="#fcc419"/></svg>
<div class="b" style="left:542.3px;top:14.8px;width:1.6px;height:1.6px;background:#f4c89e;"></div>
<div class="b" style="left:542.3px;top:19.4px;width:1.6px;height:1.6px;background:#f4c89e;"></div>
<div class="b" style="left:542.3px;top:24.0px;width:1.6px;height:1.6px;background:#f4c89e;"></div>
<svg class="b" style="left:551px;top:15px;" width="12" height="12" viewBox="0 0 12 12"><path d="M2 2l8 8M10 2l-8 8" stroke="#5f6368" stroke-width="1.8" fill="none"/></svg>
<svg class="b" style="left:1328px;top:11px;" width="20" height="20" viewBox="0 0 20 20"><circle cx="10" cy="10" r="10" fill="#fff"/>
<path d="M17.5 10.2c0-.55-.05-1.05-.14-1.55H10.2v2.95h4.1c-.18.95-.72 1.75-1.52 2.3v1.9h2.45c1.45-1.33 2.27-3.28 2.27-5.6z" fill="#4285f4"/>
<path d="M10.2 17.7c2.05 0 3.77-.68 5.03-1.84l-2.45-1.9c-.68.45-1.55.72-2.58.72-1.98 0-3.66-1.34-4.26-3.14H3.4v1.96c1.25 2.48 3.82 4.2 6.8 4.2z" fill="#34a853"/>
<path d="M5.94 11.54c-.15-.45-.24-.94-.24-1.44s.09-.99.24-1.44V6.7H3.4a7.6 7.6 0 0 0 0 6.8z" fill="#fbbc05"/>
<path d="M10.2 5.52c1.12 0 2.12.38 2.9 1.14l2.18-2.18C13.96 3.25 12.24 2.5 10.2 2.5c-2.98 0-5.55 1.71-6.8 4.2l2.54 1.96c.6-1.8 2.28-3.14 4.26-3.14z" fill="#ea4335"/></svg>
<svg class="b" style="left:1374px;top:11px;" width="20" height="20" viewBox="0 0 20 20"><rect x="1" y="4" width="18" height="14" rx="4" fill="#29b6e8"/>
<rect x="9.3" y="1" width="1.4" height="3.5" fill="#29b6e8"/><circle cx="10" cy="1.3" r="1.2" fill="#29b6e8"/>
<text x="2.6" y="11" font-family="Liberation Sans,sans-serif" font-size="6" font-weight="700" fill="#fff">KID</text>
<text x="2" y="16.6" font-family="Liberation Sans,sans-serif" font-size="5.6" font-weight="700" fill="#fff">BUM</text></svg>
<svg class="b" style="left:1418px;top:11px;" width="24" height="20" viewBox="0 0 24 20"><path d="M1 9.5L12 3.5l11 5-11 6z" fill="#3b82f0"/>
<path d="M1 9.5v2.8l11 5 9-4.8" fill="none" stroke="#3b82f0" stroke-width="1.6"/>
<circle cx="21.5" cy="12.5" r="1.6" fill="#fff" stroke="#3b82f0" stroke-width="1.2"/></svg>
<svg class="b" style="left:1464px;top:11px;" width="24" height="20" viewBox="0 0 24 20"><path d="M1 9.5L12 3.5l11 5-11 6z" fill="#3b82f0"/>
<path d="M1 9.5v2.8l11 5 9-4.8" fill="none" stroke="#3b82f0" stroke-width="1.6"/>
<circle cx="21.5" cy="12.5" r="1.6" fill="#fff" stroke="#3b82f0" stroke-width="1.2"/></svg>
<svg class="b" style="left:1513px;top:11px;" width="20" height="20" viewBox="0 0 22 22"><rect x="0" y="0" width="22" height="22" rx="3.500" fill="#1b1b1b"/>
<path d="M8 16.5c2.2.3 2.6-1.3 3-5s.8-5.3 3.2-5.8" stroke="#fff" stroke-width="2" fill="none" stroke-linecap="round"/></svg>
<svg class="b" style="left:1559px;top:11px;" width="20" height="20" viewBox="0 0 20 20"><path d="M10 1L19 10.5c.6.8 0 1.5-.8 1.5H1.8C1 12 .4 11.300 1 10.5z" fill="#111"/>
<path d="M10 2.5l3 3.2-1.500 1-1.500-1.200-1.500 1.200-1.500-1z" fill="#fff"/>
<path d="M4 13.500h3l1 2-3 .5zM9 14h5l-1 3H10zM14.500 13.500l3 .5-1.500 2z" fill="#111"/>
<path d="M8 17.500l2 2 2-2z" fill="#111"/></svg>
<svg class="b" style="left:1615.5px;top:13.5px;" width="15" height="15" viewBox="0 0 15 15"><path d="M7.500 0.500v14M0.500 7.500h14" stroke="#5f6368" stroke-width="2" fill="none"/></svg>
<svg class="b" style="left:1713px;top:12.7px;" width="18" height="18" viewBox="0 0 18 18"><circle cx="9" cy="9" r="8.800" fill="#5f6368"/><path d="M5.300 7h7.400L9 12z" fill="#fff"/></svg>
<svg class="b" style="left:1771px;top:17px;" width="14" height="1" viewBox="0 0 14 1"><rect width="13" height="1" fill="#7c7f83"/></svg>
<svg class="b" style="left:1826.5px;top:11.5px;" width="14" height="14" viewBox="0 0 14 14"><path d="M3.500 3.500v-3h10v10h-3" fill="none" stroke="#85888c" stroke-width="1"/><rect x="0.500" y="3.500" width="10" height="10" fill="none" stroke="#85888c" stroke-width="1"/></svg>
<svg class="b" style="left:1884.5px;top:11.5px;" width="14" height="14" viewBox="0 0 14 14"><path d="M0.500 0.500l13 13M13.500 0.500l-13 13" stroke="#85888c" stroke-width="1.100" fill="none"/></svg>
<div class="b" style="left:0px;top:42px;width:1920px;height:45px;background:#ffffff;"></div>
<div class="b" style="left:0px;top:87px;width:1920px;height:2px;background:#dcdde0;"></div>
<svg class="b" style="left:18px;top:55px;" width="20" height="20" viewBox="0 0 20 20"><path d="M17.500 10H3M9.500 3.200L2.800 10l6.700 6.800" stroke="#5f6368" stroke-width="2" fill="none"/></svg>
<svg class="b" style="left:58px;top:55px;" width="20" height="20" viewBox="0 0 20 20"><path d="M2.500 10H17M10.500 3.200L17.200 10l-6.700 6.800" stroke="#bdc1c6" stroke-width="2" fill="none"/></svg>
<svg class="b" style="left:97px;top:54px;" width="22" height="22" viewBox="0 0 22 22"><path d="M17.800 11a7 7 0 1 1-2.300-5.200" stroke="#5f6368" stroke-width="2" fill="none"/><path d="M18.500 2.500v6h-6z" fill="#5f6368"/></svg>
<div class="b" style="left:135px;top:47px;width:1610px;height:35px;background:#f1f3f4;border-radius:17.5px;"></div>
<svg class="b" style="left:152px;top:57.5px;" width="11" height="15" viewBox="0 0 11 15"><rect x="0.300" y="5.500" width="10.400" height="8.700" rx="1.300" fill="#5f6368"/><path d="M2.700 6V4a2.800 2.800 0 0 1 5.600 0v2" fill="none" stroke="#5f6368" stroke-width="1.600"/></svg>
<span class="t" style="left:178.00px;top:57px;font-size:17px;color:#202124;letter-spacing:0.321px;">tinkercad.com</span>
<span class="t" style="left:288.00px;top:57px;font-size:17px;color:#5f6368;letter-spacing:0.103px;">/things/6kEpW7fENxY-exquisite-am</span>
<svg class="b" style="left:1712.5px;top:54.5px;" width="20" height="20" viewBox="0 0 20 20"><path d="M10 1.700l2.450 5.650 6.100.550-4.600 4.050 1.400 6L10 14.800l-5.350 3.150 1.400-6-4.600-4.050 6.100-.550z" fill="none" stroke="#5f6368" stroke-width="1.600" stroke-linejoin="round"/></svg>
<svg class="b" style="left:1762px;top:54px;" width="21" height="21" viewBox="0 0 21 21"><rect width="21" height="21" fill="#16a736"/><path d="M4 10.500l4.500 4.800L17.500 5" stroke="#fff" stroke-width="3.200" fill="none"/></svg>
<svg class="b" style="left:1803px;top:55px;" width="20" height="20" viewBox="0 0 20 20"><path d="M8 1.500a2 2 0 0 1 2 2V5h4.500a1 1 0 0 1 1 1v3.500H17a2 2 0 0 1 0 4.500h-1.500V18a1 1 0 0 1-1 1H11v-1.500a2.200 2.200 0 0 0-4.400 0V19H3a1 1 0 0 1-1-1v-3.800h1.300a2.200 2.200 0 0 0 0-4.400H2V6a1 1 0 0 1 1-1h3V3.500a2 2 0 0 1 2-2z" fill="#5f6368"/></svg>
<div class="b" style="left:1839px;top:51px;width:28px;height:28px;background:radial-gradient(circle at 50% 50%,#d8381c 0%,#a8200f 40%,#6d1410 75%,#4a1212 100%);border-radius:50%;overflow:hidden;"><div class="b" style="left:3px;top:3px;width:5px;height:22px;background:linear-gradient(to right,#e8932a,#b8481a);opacity:.8"></div><div class="b" style="left:21px;top:5px;width:4px;height:16px;background:#d05a1c;opacity:.7"></div><div class="b" style="left:8px;top:11px;width:6px;height:4.500px;background:#ffeccc;border-radius:50%;box-shadow:0 0 3px 1.500px #ff5a2a"></div><div class="b" style="left:15.500px;top:11px;width:6px;height:4.500px;background:#ffeccc;border-radius:50%;box-shadow:0 0 3px 1.500px #ff5a2a"></div></div>
<div class="b" style="left:1890.5px;top:56.5px;width:4px;height:4px;background:#5f6368;border-radius:50%;"></div>
<div class="b" style="left:1890.5px;top:62.75px;width:4px;height:4px;background:#5f6368;border-radius:50%;"></div>
<div class="b" style="left:1890.5px;top:69.0px;width:4px;height:4px;background:#5f6368;border-radius:50%;"></div>
<div class="b" style="left:0px;top:961px;width:1920px;height:69px;background:#ffffff;"></div>
<svg class="b" style="left:25px;top:985px;" width="20" height="20" viewBox="0 0 48 48"><defs><linearGradient id="ega1" x1="0.100" y1="0.200" x2="1" y2="0.700"><stop offset="0" stop-color="#35bff4"/><stop offset=".45" stop-color="#2cc4d3"/><stop offset=".8" stop-color="#4fd27a"/><stop offset="1" stop-color="#6fe04a"/></linearGradient><linearGradient id="egb1" x1="0" y1="0" x2="0.300" y2="1"><stop offset="0" stop-color="#1595e0"/><stop offset="1" stop-color="#0a6bd0"/></linearGradient><linearGradient id="egc1" x1="0" y1="0" x2="1" y2="1"><stop offset="0" stop-color="#0d62b8"/><stop offset="1" stop-color="#0c4a94"/></linearGradient><mask id="egm1"><circle cx="24" cy="24" r="24" fill="#fff"/><path d="M24 18.500C21 18.500 19 21 19 23.500C19 30 26 36 35 36C39 36 43 35.500 46.500 34.500L47.500 31C43 33.500 38 34 34 33C30 32 27.500 30 27.500 27.500C27.500 26 29.500 25 29.500 23C29.500 20.500 27 18.500 24 18.500Z" fill="#000"/></mask></defs><g mask="url(#egm1)"><circle cx="24" cy="24" r="24" fill="url(#egb1)"/><path d="M19 23.500C15 26 13.500 31 15.500 37C17.500 43 22 47 28 48C37 48 43 43 46.500 35C42 36 38 36.300 35 36C26 36 19 30 19 23.500Z" fill="url(#egc1)"/><path d="M-1 23C2 9 12 -1 24 -1C38 -1 49 10 49 21C49 28 44 33.500 37 33.500C31 33.500 27.500 31 27.500 27.500C27.500 26 29.500 25 29.500 23C29.500 18 25 13.500 19 13.500C11 13.500 3 17 -1 23Z" fill="url(#ega1)"/></g></svg>
<span class="t" style="left:94.50px;top:989px;font-size:15.5px;color:#45494d;letter-spacing:0.077px;">Front panel.svg</span>
<svg class="b" style="left:260.5px;top:992px;" width="12" height="8" viewBox="0 0 12 8"><path d="M1 7l5-5.500L11 7" stroke="#5f6368" stroke-width="1.700" fill="none"/></svg>
<div class="b" style="left:295px;top:969.5px;width:1px;height:54.5px;background:#d5d7da;"></div>
<div class="b" style="left:1778px;top:975.5px;width:98px;height:39.5px;background:#fff;border:1px solid #dadce0;border-radius:5px;"></div>
<span class="t" style="left:1798.50px;top:987px;font-size:16px;color:#1a62d6;letter-spacing:-0.498px;-webkit-text-stroke:.3px #1a62d6;">Show all</span>
<svg class="b" style="left:1890.5px;top:989px;" width="12" height="12" viewBox="0 0 12 12"><path d="M1 1l10 10M11 1L1 11" stroke="#4a4d51" stroke-width="1.900" fill="none"/></svg>
<div class="b" style="left:0px;top:1030px;width:1920px;height:50px;background:linear-gradient(to right,#211b19 0,#2a221f 25%,#3a302a 42%,#33291f 60%,#2c2420 80%,#292220 100%);"></div>
<div class="b" style="left:0px;top:1030px;width:60px;height:50px;background:#1e1a18;"></div>
<svg class="b" style="left:20px;top:1045px;" width="20" height="20" viewBox="0 0 20 20"><path d="M0 2.800L8.200 1.700v7.800H0zM9.200 1.500L20 0v9.500H9.200zM0 10.500h8.200v7.800L0 17.200zM9.200 10.500H20V20L9.200 18.500z" fill="#fff"/></svg>
<div class="b" style="left:60px;top:1030px;width:430px;height:50px;background:#f2f2f2;border-top:1px solid #c4c4c4;border-bottom:1px solid #cfcfcf;"></div>
<svg class="b" style="left:74px;top:1044px;" width="22" height="22" viewBox="0 0 22 22"><circle cx="13.500" cy="8.500" r="6.300" stroke="#222" stroke-width="1.500" fill="none"/><path d="M9 13L1.500 20.500" stroke="#222" stroke-width="1.600"/></svg>
<span class="t" style="left:110.70px;top:1046px;font-size:19px;color:#2b2b2b;letter-spacing:-0.286px;">Type here to search</span>
<div class="b" style="left:510.5px;top:1045.5px;width:19.5px;height:19.5px;border:3px solid #fff;border-radius:50%;"></div>
<svg class="b" style="left:569px;top:1044px;" width="22" height="22" viewBox="0 0 22 22"><path d="M1 2.500h12M1 19.500h12" stroke="#fff" stroke-width="1.300"/><rect x="2" y="6" width="10" height="10" fill="none" stroke="#fff" stroke-width="1.300"/><path d="M17.500 1.500v19" stroke="#fff" stroke-width="1.300" stroke-dasharray="3 2 5 2 9"/><rect x="15.800" y="7.500" width="3.400" height="3" fill="#fff"/><path d="M2 2.500v2M12 2.500v2M2 17.500v2M12 17.500v2" stroke="#fff" stroke-width="1.300"/></svg>
<svg class="b" style="left:629px;top:1041px;" width="30" height="26" viewBox="0 0 30 26"><path d="M1 3a1.500 1.500 0 0 1 1.500-1.500h8l2.500 3h14.500a1.500 1.500 0 0 1 1.500 1.500v17.500H1z" fill="#f7b928"/><path d="M1 8h28v15.500H1z" fill="#fcd462"/><path d="M7 16.500h16v7H7z" fill="#3a8fdb"/><path d="M10.500 19.500h9v4h-9z" fill="#fcd462"/><path d="M1 23h28v1.500H1z" fill="#e6a81c"/></svg>
<div class="b" style="left:619px;top:1077px;width:40px;height:3px;background:#76b9ed;"></div>
<div class="b" style="left:660px;top:1077px;width:10px;height:3px;background:#5d8fb8;"></div>
<svg class="b" style="left:690px;top:1039px;" width="30" height="32" viewBox="0 0 30 32"><path d="M9.500 8V5.500a5.500 5.500 0 0 1 11 0V8" stroke="#cfcfcf" stroke-width="2" fill="none"/><path d="M1 8h28v22H1z" fill="#f4f4f4"/><rect x="9.500" y="13.500" width="5" height="5" fill="#f25022"/><rect x="15.500" y="13.500" width="5" height="5" fill="#7fba00"/><rect x="9.500" y="19.500" width="5" height="5" fill="#00a4ef"/><rect x="15.500" y="19.500" width="5" height="5" fill="#ffb900"/></svg>
<svg class="b" style="left:753px;top:1040.5px;" width="29" height="29" viewBox="0 0 29 29"><defs><linearGradient id="stg" x1="0" y1="0" x2="0" y2="1"><stop offset="0" stop-color="#111d2e"/><stop offset="1" stop-color="#1387b8"/></linearGradient></defs><circle cx="14.500" cy="14.500" r="14.500" fill="url(#stg)"/><circle cx="19" cy="11" r="4.500" fill="none" stroke="#fff" stroke-width="1.800"/><circle cx="19" cy="11" r="2" fill="#fff"/><path d="M0.500 15l9 4 6-6" stroke="#fff" stroke-width="3" fill="none" stroke-linecap="round"/><circle cx="9.500" cy="19.500" r="3.200" fill="#fff"/></svg>
<svg class="b" style="left:814px;top:1040px;" width="32" height="31" viewBox="0 0 32 31"><path d="M2 1.500l5 1.500h18l5-1.500 1 6-2.500 18-5 4h-15l-5-4L1 7.500z" fill="#14181b"/><path d="M3 4c-1.500 7-1 15 1.500 22" stroke="#19b7dd" stroke-width="1.200" fill="none"/><path d="M29 4c1.500 7 1 15-1.500 22" stroke="#19b7dd" stroke-width="1.200" fill="none"/><path d="M8 9l5 5 3 8 3-8 5-5-1 14-3 3-1.500-7-2.500 4-2.500-4L12 26l-3-3z" fill="#8a8f94"/></svg>
<svg class="b" style="left:876px;top:1040px;" width="36" height="30" viewBox="0 0 36 30"><path d="M1 11L16 1l15 10v17H1z" fill="#1d7fd8"/><path d="M3.500 9.500h25v12h-25z" fill="#fff"/><path d="M1 11l15 9 15-9v17H1z" fill="#2aa2f2"/><path d="M1 28l15-12 15 12z" fill="#1587dc"/></svg>
<div class="b" style="left:897.5px;top:1054px;width:21px;height:21px;background:#3a3f45;border:1.500px solid #d0d0d0;border-radius:50%;"></div>
<span class="t" style="left:904.50px;top:1058px;font-size:14px;color:#fff;font-weight:700;">1</span>
<div class="b" style="left:924px;top:1030px;width:61px;height:50px;background:rgba(255,255,255,.17);"></div>
<div class="b" style="left:924px;top:1077px;width:61px;height:3px;background:#76b9ed;"></div>
<svg class="b" style="left:939.5px;top:1040.5px;" width="29" height="29" viewBox="0 0 48 48"><circle cx="24" cy="24" r="23" fill="#fff"/><path d="M24 1a23 23 0 0 1 19.900 11.500H24a11.500 11.500 0 0 0-10 5.800L5.600 10A23 23 0 0 1 24 1z" fill="#e33e2b"/><path d="M43.900 12.500A23 23 0 0 1 22.500 47l9.500-17.200a11.500 11.500 0 0 0 0-11.500l1.500-5.800z" fill="#fbc116"/><path d="M22.500 47A23 23 0 0 1 5.600 10l8.400 14.300a11.500 11.500 0 0 0 13 10.800z" fill="#2da94f"/><circle cx="24" cy="24" r="10.500" fill="#fff"/><circle cx="24" cy="24" r="8.300" fill="#4a8af4"/></svg>
<svg class="b" style="left:1001px;top:1040px;" width="30" height="30" viewBox="0 0 30 30"><rect width="30" height="30" fill="#fbe3c8"/><path d="M9 25V5.500C9 3.500 11 2.500 13 2.500h9v5h-6.500v4H21v5h-5.500V25z" fill="#f08a1c"/><path d="M9 25V5.500C9 4 10 3 11.500 2.800V25z" fill="#c9650e"/><text x="16" y="28" font-family="Liberation Sans,sans-serif" font-size="5.500" font-weight="700" fill="#f08a1c">360</text></svg>
<svg class="b" style="left:1064px;top:1041.5px;" width="28" height="28" viewBox="0 0 28 28"><circle cx="14" cy="14" r="14" fill="#12979d"/><path d="M14 14c-2-3-3.500-4.200-6-4.200a4.200 4.200 0 0 0 0 8.400c2.500 0 4-1.200 6-4.200zm0 0c2 3 3.500 4.200 6 4.200a4.200 4.200 0 0 0 0-8.400c-2.500 0-4 1.200-6 4.200z" fill="none" stroke="#fff" stroke-width="2"/></svg>
<svg class="b" style="left:1125.5px;top:1040.5px;" width="29" height="29" viewBox="0 0 29 29"><rect width="29" height="29" rx="9" fill="#2d8cff"/><rect x="5.500" y="9.500" width="12.500" height="10" rx="2.200" fill="#fff"/><path d="M19 13l4.500-3v9L19 16z" fill="#fff"/></svg>
<svg class="b" style="left:1187px;top:1040px;" width="30" height="30" viewBox="0 0 30 30"><path d="M6 0h24v22l-6 8H0V7z" fill="#0fa3e6"/><path d="M22 9.500h-6.500a5.500 5.500 0 0 0 0 11H22" stroke="#fff" stroke-width="4.200" fill="none"/></svg>
<svg class="b" style="left:1249px;top:1040px;" width="30" height="30" viewBox="0 0 30 30"><path d="M15 1l14 14-14 14L1 15z" fill="#0d0d0d"/><path d="M17 3l11 12-11 12 1-9h-5l4-7z" fill="#3a8ee6"/><path d="M16 6l-2 9h4l-3 9" stroke="#7fc0ff" stroke-width="1.200" fill="none"/></svg>
<svg class="b" style="left:1311px;top:1040px;" width="30" height="28" viewBox="0 0 30 28"><rect x="8" y="0" width="22" height="28" rx="1.500" fill="#2b7cd3"/><rect x="8" y="0" width="22" height="7" fill="#41a5ee"/><rect x="8" y="14" width="22" height="7" fill="#185abd"/><rect x="8" y="21" width="22" height="7" fill="#103f91"/><rect x="0" y="6" width="16" height="16" rx="1.500" fill="#185abd"/><text x="2.600" y="18.600" font-family="Liberation Sans,sans-serif" font-size="11.500" font-weight="700" fill="#fff">W</text></svg>
<div class="b" style="left:1301px;top:1077px;width:51px;height:3px;background:#76b9ed;"></div>
<svg class="b" style="left:1372.8px;top:1039.5px;" width="30.4" height="30.4" viewBox="0 0 48 48"><defs><linearGradient id="ega2" x1="0.100" y1="0.200" x2="1" y2="0.700"><stop offset="0" stop-color="#35bff4"/><stop offset=".45" stop-color="#2cc4d3"/><stop offset=".8" stop-color="#4fd27a"/><stop offset="1" stop-color="#6fe04a"/></linearGradient><linearGradient id="egb2" x1="0" y1="0" x2="0.300" y2="1"><stop offset="0" stop-color="#1595e0"/><stop offset="1" stop-color="#0a6bd0"/></linearGradient><linearGradient id="egc2" x1="0" y1="0" x2="1" y2="1"><stop offset="0" stop-color="#0d62b8"/><stop offset="1" stop-color="#0c4a94"/></linearGradient><mask id="egm2"><circle cx="24" cy="24" r="24" fill="#fff"/><path d="M24 18.500C21 18.500 19 21 19 23.500C19 30 26 36 35 36C39 36 43 35.500 46.500 34.500L47.500 31C43 33.500 38 34 34 33C30 32 27.500 30 27.500 27.500C27.500 26 29.500 25 29.500 23C29.500 20.500 27 18.500 24 18.500Z" fill="#000"/></mask></defs><g mask="url(#egm2)"><circle cx="24" cy="24" r="24" fill="url(#egb2)"/><path d="M19 23.500C15 26 13.500 31 15.500 37C17.500 43 22 47 28 48C37 48 43 43 46.500 35C42 36 38 36.300 35 36C26 36 19 30 19 23.500Z" fill="url(#egc2)"/><path d="M-1 23C2 9 12 -1 24 -1C38 -1 49 10 49 21C49 28 44 33.500 37 33.500C31 33.500 27.500 31 27.500 27.500C27.500 26 29.500 25 29.500 23C29.500 18 25 13.500 19 13.500C11 13.500 3 17 -1 23Z" fill="url(#ega2)"/></g></svg>
<div class="b" style="left:1362.5px;top:1077px;width:51.5px;height:3px;background:#76b9ed;"></div>
<svg class="b" style="left:1514px;top:1050px;" width="17" height="10" viewBox="0 0 17 10"><path d="M1 9l7.500-7.500L16 9" stroke="#fff" stroke-width="1.400" fill="none"/></svg>
<svg class="b" style="left:1544px;top:1045px;" width="20" height="20" viewBox="0 0 20 20"><rect x="2.500" y="5.500" width="10" height="9" rx="1.500" fill="none" stroke="#fff" stroke-width="1.300"/><path d="M13 9l4-2.500v7L13 11" fill="none" stroke="#fff" stroke-width="1.300"/><path d="M3 2.500c3-1.500 6-1.500 9 0M3 17.500c3 1.500 6 1.500 9 0" stroke="#fff" stroke-width="1.200" fill="none"/></svg>
<svg class="b" style="left:1571px;top:1047px;" width="22" height="15" viewBox="0 0 22 15"><path d="M5 14h12.500a3.800 3.800 0 0 0 .5-7.500A6.200 6.200 0 0 0 6.500 5 4.700 4.700 0 0 0 5 14z" fill="#e8e8e8"/><path d="M8 4l5 4 5-1.500A6.200 6.200 0 0 0 8 4z" fill="#bdbdbd"/></svg>
<svg class="b" style="left:1600px;top:1047px;" width="23" height="15" viewBox="0 0 23 15"><rect x="3.500" y="4.500" width="16" height="8" fill="none" stroke="#fff" stroke-width="1.200"/><rect x="5" y="6" width="13" height="5" fill="#fff"/><rect x="20" y="6.500" width="1.800" height="4" fill="#fff"/><path d="M3 1v3M6 1v3M1.500 4h6v2.500a3 3 0 0 1-6 0z" fill="#fff" stroke="#fff" stroke-width=".8"/></svg>
<svg class="b" style="left:1633px;top:1045px;" width="21" height="20" viewBox="0 0 21 20"><path d="M2 18C4 9 10 3.500 18.500 2M6.500 18.500c1.500-6 5.500-10 12-11.500M11 19c1-3.500 3.500-6 7.500-7" stroke="#c8c8c8" stroke-width="1.400" fill="none"/><circle cx="16.500" cy="17.500" r="1.600" fill="#fff"/></svg>
<svg class="b" style="left:1661px;top:1045px;" width="24" height="20" viewBox="0 0 24 20"><path d="M1.500 7h3.500l4.500-4.500v15L5 13H1.500z" fill="none" stroke="#fff" stroke-width="1.300"/><path d="M12.500 7.500c1 1.500 1 3.500 0 5M15.500 5c2 3 2 7 0 10M18.500 2.500c3 4.500 3 10.500 0 15" stroke="#fff" stroke-width="1.300" fill="none"/></svg>
<svg class="b" style="left:1690px;top:1045px;" width="22" height="22" viewBox="0 0 22 22"><path d="M6.500 1l5 3-5 3-5-3zM15.500 1l5 3-5 3-5-3zM11 7l5 3-5 3-5-3zM15.500 7.500l5 3-5 3M11 14.500l4 2.500-4 2.500" fill="#fff"/><rect x="0" y="8" width="11.500" height="11.500" rx="1.500" fill="#d8102a"/></svg>
<span class="t" style="left:1693.30px;top:1054px;font-size:10.5px;color:#fff;font-weight:700;">4</span>
<span class="t" style="left:1725.00px;top:1048px;font-size:15px;color:#fff;letter-spacing:-1.272px;">ENG</span>
<span class="t" style="left:1791.00px;top:1035px;font-size:15px;color:#fff;letter-spacing:-0.709px;">13:56</span>
<span class="t" style="left:1769.70px;top:1058px;font-size:15px;color:#fff;letter-spacing:-0.008px;">03/06/2021</span>
<svg class="b" style="left:1869px;top:1044px;" width="22" height="20" viewBox="0 0 22 20"><path d="M1 1h19v14H7l-3.500 3.500V15H1z" fill="#fff"/><path d="M4.500 5h12M4.500 8h12M4.500 11h12" stroke="#2b2421" stroke-width="1.200"/></svg>
<div class="b" style="left:1878px;top:1055px;width:21px;height:21px;background:#2f2825;border:1.500px solid #9a9a9a;border-radius:50%;"></div>
<span class="t" style="left:1884.50px;top:1059px;font-size:14px;color:#fff;font-weight:700;">9</span>
<div class="b" style="left:1914px;top:1030px;width:1px;height:50px;background:#6b6562;"></div>
<div class="b" style="left:559px;top:0px;width:766px;height:628px;background:#ffffff;box-shadow:0 2px 14px rgba(0,0,0,.45),0 0 3px rgba(0,0,0,.35);"></div>
<svg class="b" style="left:570px;top:10px;" width="18" height="18" viewBox="0 0 48 48"><circle cx="24" cy="24" r="23" fill="#fff"/><path d="M24 1a23 23 0 0 1 19.900 11.500H24a11.500 11.500 0 0 0-10 5.800L5.600 10A23 23 0 0 1 24 1z" fill="#e33e2b"/><path d="M43.900 12.500A23 23 0 0 1 22.500 47l9.500-17.200a11.500 11.500 0 0 0 0-11.500l1.500-5.800z" fill="#fbc116"/><path d="M22.500 47A23 23 0 0 1 5.600 10l8.400 14.300a11.500 11.500 0 0 0 13 10.800z" fill="#2da94f"/><circle cx="24" cy="24" r="10.500" fill="#fff"/><circle cx="24" cy="24" r="8.300" fill="#4a8af4"/></svg>
<span class="t" style="left:594.00px;top:12px;font-size:15px;color:#000000;letter-spacing:-0.221px;">Save As</span>
<svg class="b" style="left:1296.5px;top:12.5px;" width="13" height="13" viewBox="0 0 13 13"><path d="M0.500 0.500l12 12M12.500 0.500l-12 12" stroke="#000" stroke-width="1.200" fill="none"/></svg>
<svg class="b" style="left:575px;top:56px;" width="16" height="14" viewBox="0 0 16 14"><path d="M15.500 7H1.500M7 1.200L1.200 7 7 12.800" stroke="#d0d0d0" stroke-width="1.500" fill="none"/></svg>
<svg class="b" style="left:615px;top:56px;" width="16" height="14" viewBox="0 0 16 14"><path d="M0.500 7h14M9 1.200L14.800 7 9 12.800" stroke="#d0d0d0" stroke-width="1.500" fill="none"/></svg>
<svg class="b" style="left:647.5px;top:60px;" width="9" height="6" viewBox="0 0 9 6"><path d="M0.700 0.700L4.500 4.500 8.300 0.700" stroke="#d6d6d6" stroke-width="1.300" fill="none"/></svg>
<svg class="b" style="left:672px;top:56px;" width="13" height="16" viewBox="0 0 13 16"><path d="M6.500 15.500V1.500M1 7L6.500 1.300 12 7" stroke="#6a6a6a" stroke-width="1.500" fill="none"/></svg>
<div class="b" style="left:694px;top:43px;width:353px;height:39px;background:#fff;border:1px solid #d9d9d9;"></div>
<div class="b" style="left:1004px;top:43px;width:1px;height:39px;background:#d9d9d9;"></div>
<svg class="b" style="left:699.5px;top:54px;" width="13" height="17" viewBox="0 0 13 17"><path d="M0.500 0.500h8.500l3 2.500v12h-9.500l-2 1.500z" fill="#f5d36a"/><path d="M0.500 0.500h2.500v14.500l-2.500 1.500z" fill="#e3b53c"/><path d="M3 2h8.500v13H3z" fill="#f8dc82"/></svg>
<span class="t" style="left:723.50px;top:56px;font-size:14px;color:#555;letter-spacing:-1px;">«</span>
<span class="t" style="left:742.50px;top:55px;font-size:15px;color:#000000;letter-spacing:0.038px;">Walking Robot</span>
<svg class="b" style="left:849.5px;top:57px;" width="7" height="11" viewBox="0 0 7 11"><path d="M1 1l4.500 4.500L1 10" stroke="#666" stroke-width="1.300" fill="none"/></svg>
<span class="t" style="left:867.50px;top:55px;font-size:15px;color:#000000;letter-spacing:-1.896px;">SVG</span>
<svg class="b" style="left:978px;top:59px;" width="12" height="8" viewBox="0 0 12 8"><path d="M1 1.200l5 5 5-5" stroke="#555" stroke-width="1.600" fill="none"/></svg>
<svg class="b" style="left:1018px;top:55px;" width="16" height="16" viewBox="0 0 16 16"><path d="M12.500 3.800a6.300 6.300 0 1 1-8.600-.300" stroke="#777" stroke-width="1.500" fill="none"/><path d="M4.300 0.500v4h4" stroke="#777" stroke-width="1.500" fill="none"/></svg>
<div class="b" style="left:1059px;top:43px;width:253px;height:39px;background:#fff;border:1px solid #d9d9d9;"></div>
<svg class="b" style="left:1076px;top:54px;" width="17" height="17" viewBox="0 0 17 17"><circle cx="10.500" cy="6.500" r="5.300" stroke="#7b7b7b" stroke-width="1.200" fill="none"/><path d="M6.800 10.300L.8 16.300" stroke="#7b7b7b" stroke-width="1.300"/></svg>
<span class="t" style="left:1110.00px;top:55px;font-size:15px;color:#6d6d6d;letter-spacing:-0.838px;">Search SVG</span>
<div class="b" style="left:560px;top:89px;width:764px;height:38.5px;background:#f5f6f7;border-bottom:1px solid #e8e9ea;"></div>
<span class="t" style="left:582.50px;top:101px;font-size:15px;color:#1e395b;letter-spacing:-0.234px;">Organize</span>
<svg class="b" style="left:647.5px;top:105.5px;" width="9" height="5" viewBox="0 0 9 5"><path d="M0 0h9L4.500 5z" fill="#1e3050"/></svg>
<span class="t" style="left:692.50px;top:101px;font-size:15px;color:#1e395b;letter-spacing:0.180px;">New folder</span>
<svg class="b" style="left:1208px;top:100px;" width="19" height="17" viewBox="0 0 19 17"><rect x=".5" y=".5" width="5" height="15" fill="#fff" stroke="#a0a0a0" stroke-width=".8"/><path d="M.5 5.500h5M.5 10.500h5" stroke="#a0a0a0" stroke-width=".8"/><rect x="2" y="2" width="2" height="2" fill="#2b7bd6"/><rect x="2" y="7" width="2" height="2" fill="#8aa12f"/><rect x="2" y="12" width="2" height="2" fill="#d23a2a"/><path d="M8 3h4M13.500 3h4.500M8 8h4M13.500 8h4.500M8 13h4M13.500 13h4.500" stroke="#666" stroke-width="1"/></svg>
<svg class="b" style="left:1239px;top:105.5px;" width="9" height="5" viewBox="0 0 9 5"><path d="M0 0h9L4.500 5z" fill="#1e3050"/></svg>
<div class="b" style="left:1285px;top:98px;width:20px;height:20px;background:#0a5dc2;border-radius:50%;border:1px solid #084a9c;"></div>
<span class="t" style="left:1290.50px;top:101px;font-size:15px;color:#fff;font-weight:700;">?</span>
<div class="b" style="left:560px;top:128px;width:764px;height:347px;background:#ffffff;"></div>
<div class="b" style="left:560px;top:238px;width:175px;height:30px;background:#d9d9d9;"></div>
<svg class="b" style="left:590px;top:146px;" width="21" height="14" viewBox="0 0 21 14"><path d="M6.500 13.500h10.800a3.700 3.700 0 0 0 .7-7.300A5.800 5.800 0 0 0 7 4.200 4.800 4.800 0 0 0 6.500 13.500z" fill="#0f6fd0"/><path d="M4 13.500h12a3.400 3.400 0 0 0 1.500-6.500L8 9.500 2.500 8A3.200 3.200 0 0 0 4 13.500z" fill="#2493ee"/><path d="M7 4.200l5 3.500 5.500-1A5.800 5.800 0 0 0 7 4.200z" fill="#0a57b0"/></svg>
<svg class="b" style="left:590px;top:184px;" width="22" height="19" viewBox="0 0 22 19"><path d="M6.500 1l13 3v9l-13-2.500z" fill="#3a9fe8"/><path d="M6.500 1l13 3v9l-13-2.500z" fill="none" stroke="#6f8aa0" stroke-width=".8"/><path d="M11 11.500l3 .8v2l-5.500.8z" fill="#8c9aa6"/><path d="M1 15.500l8-1.500 5 2-8.500 2.300z" fill="#dfe3e6" stroke="#b9c0c6" stroke-width=".6"/></svg>
<svg class="b" style="left:600px;top:213px;" width="20" height="20" viewBox="0 0 20 20"><path d="M10 1l9 3.500v10.500l-9 4-9-4V4.500z" fill="#3cc1d8"/><path d="M10 1l9 3.500-9 3.800-9-3.800z" fill="#9fe6ef"/><path d="M10 8.300V19l9-4V4.500z" fill="#1f93ad"/><path d="M1 4.500l9 3.800v5.200l-9-3z" fill="#c4f0f5"/></svg>
<svg class="b" style="left:600px;top:245px;" width="20" height="15" viewBox="0 0 20 15"><rect x=".5" y=".5" width="18.500" height="13" fill="#2f9bea" stroke="#1474c4" stroke-width="1"/><path d="M1 1h18L1 10z" fill="#53b1f3"/><rect x="1.500" y="11.600" width="14" height="1" fill="#fff" opacity=".8"/></svg>
<svg class="b" style="left:602px;top:273px;" width="16" height="20" viewBox="0 0 16 20"><path d="M1 .5h10l4 4v15H1z" fill="#fff" stroke="#8a8a8a" stroke-width="1"/><path d="M11 .5v4h4" fill="#e8e8e8" stroke="#8a8a8a" stroke-width=".8"/><path d="M3.500 6h6M3.500 8.500h9M3.500 11h9M3.500 13.500h9M3.500 16h9" stroke="#6e9ac9" stroke-width="1"/><rect x="3.500" y="3" width="3" height="2.500" fill="#2d7bd0"/></svg>
<svg class="b" style="left:601px;top:305px;" width="18" height="18" viewBox="0 0 18 18"><path d="M5.500 0h7v8h5.200L9 17.500.300 8H5.500z" fill="#2b88dd"/><path d="M5.500 0h7v3h-7z" fill="#51a6ee"/></svg>
<svg class="b" style="left:603px;top:333px;" width="14" height="20" viewBox="0 0 14 20"><path d="M7.200 1v12.500" stroke="#1d95ea" stroke-width="1.800"/><path d="M7.200 1c1 3 5 3.500 4.500 8" stroke="#1d95ea" stroke-width="1.800" fill="none"/><ellipse cx="4.500" cy="15" rx="3.800" ry="3" fill="#1d95ea"/></svg>
<svg class="b" style="left:600px;top:365px;" width="20" height="16" viewBox="0 0 20 16"><rect x=".5" y=".5" width="18.500" height="14" fill="#fff" stroke="#9a9a9a"/><rect x="2.300" y="2.300" width="15" height="10.500" fill="#7fc3f0"/><path d="M2.300 9l5-4 4 3 6-1v5.800h-15z" fill="#4d8a62"/><path d="M2.300 11l15-1.500v3.300h-15z" fill="#e8f1f5"/></svg>
<svg class="b" style="left:600px;top:392px;" width="20" height="20" viewBox="0 0 20 20"><rect x=".5" y=".5" width="18.500" height="18.500" fill="#4b4b4b"/><rect x="4" y="1.500" width="11.500" height="8" fill="#3f78d8"/><rect x="4" y="10.500" width="11.500" height="8" fill="#2f62c0"/><circle cx="10" cy="5" r="2.500" fill="#f2b33a"/><circle cx="10" cy="14" r="2.500" fill="#e0533a"/><path d="M1.200 2h1.800M1.200 5h1.800M1.200 8h1.800M1.200 11h1.800M1.200 14h1.800M1.200 17h1.800M16.700 2h1.800M16.700 5h1.800M16.700 8h1.800M16.700 11h1.800M16.700 14h1.800M16.700 17h1.800" stroke="#fff" stroke-width="1.600"/></svg>
<svg class="b" style="left:599px;top:426px;" width="21" height="17" viewBox="0 0 21 17"><path d="M1 .5h3.500v3.500H1zM5.200 .5h3.500v3.500H5.200zM1 4.700h3.500v3.500H1zM5.200 4.700h3.500v3.500H5.200z" fill="#1ea0f0"/><path d="M2 11l15-2 3 2.500v3.500l-14 1.500-4-1.500z" fill="#d5d8db"/><path d="M2 11l4 1.500 14-1V15l-14 1.500L2 15z" fill="#a9adb2"/><circle cx="7.500" cy="14.300" r=".8" fill="#39d353"/></svg>
<svg class="b" style="left:590px;top:464px;" width="22" height="12" viewBox="0 0 22 12"><circle cx="13" cy="9.500" r="8" fill="#5aa7d8"/><path d="M8 5c3-2 7-2 10 0M6 10h14" stroke="#cfe7f5" stroke-width="1" fill="none"/><path d="M1 8l8 2v3H1z" fill="#2f8fdc"/></svg>
<span class="t" style="left:615.30px;top:146px;font-size:15px;color:#000000;letter-spacing:-0.257px;">OneDrive</span>
<span class="t" style="left:615.30px;top:186px;font-size:15px;color:#000000;letter-spacing:-0.906px;">This PC</span>
<span class="t" style="left:625.50px;top:216px;font-size:15px;color:#000000;letter-spacing:-0.170px;">3D Objects</span>
<span class="t" style="left:625.50px;top:246px;font-size:15px;color:#000000;letter-spacing:-0.147px;">Desktop</span>
<span class="t" style="left:625.50px;top:276px;font-size:15px;color:#000000;letter-spacing:-0.153px;">Documents</span>
<span class="t" style="left:625.50px;top:306px;font-size:15px;color:#000000;letter-spacing:0.031px;">Downloads</span>
<span class="t" style="left:625.50px;top:336px;font-size:15px;color:#000000;letter-spacing:-0.234px;">Music</span>
<span class="t" style="left:625.50px;top:366px;font-size:15px;color:#000000;letter-spacing:-0.461px;">Pictures</span>
<span class="t" style="left:625.50px;top:396px;font-size:15px;color:#000000;letter-spacing:-0.182px;">Videos</span>
<span class="t" style="left:625.50px;top:426px;font-size:15px;color:#000000;letter-spacing:-0.556px;">Acer (C:)</span>
<div class="b" style="left:560px;top:455px;width:176px;height:20px;overflow:hidden;">
<span class="t" style="left:55.30px;top:11px;font-size:15px;color:#000000;letter-spacing:0.141px;">Network</span>
</div>
<div class="b" style="left:736px;top:128px;width:19.5px;height:347px;background:#f0f0f0;"></div>
<svg class="b" style="left:740px;top:135px;" width="11" height="7" viewBox="0 0 11 7"><path d="M1 6l4.500-4.500L10 6" stroke="#505050" stroke-width="1.700" fill="none"/></svg>
<svg class="b" style="left:740px;top:461px;" width="11" height="7" viewBox="0 0 11 7"><path d="M1 1l4.500 4.500L10 1" stroke="#505050" stroke-width="1.700" fill="none"/></svg>
<div class="b" style="left:736px;top:293px;width:19px;height:148px;background:#c8c8c8;"></div>
<div class="b" style="left:1100px;top:128px;width:1px;height:32px;background:#e5e5e5;"></div>
<div class="b" style="left:1280px;top:128px;width:1px;height:32px;background:#e5e5e5;"></div>
<svg class="b" style="left:932px;top:128.5px;" width="11" height="6" viewBox="0 0 11 6"><path d="M0.700 5.500l4.800-4.500 4.800 4.500" stroke="#6b6b6b" stroke-width="1" fill="none"/></svg>
<span class="t" style="left:782.50px;top:137px;font-size:15px;color:#4c607a;letter-spacing:-0.254px;">Name</span>
<span class="t" style="left:1108.70px;top:137px;font-size:15px;color:#4c607a;letter-spacing:0.241px;">Date modified</span>
<span class="t" style="left:1288.40px;top:137px;font-size:15px;color:#4c607a;letter-spacing:-0.483px;">Type</span>
<svg class="b" style="left:783.5px;top:171px;" width="20.5" height="20.5" viewBox="0 0 48 48"><defs><linearGradient id="ega3" x1="0.100" y1="0.200" x2="1" y2="0.700"><stop offset="0" stop-color="#35bff4"/><stop offset=".45" stop-color="#2cc4d3"/><stop offset=".8" stop-color="#4fd27a"/><stop offset="1" stop-color="#6fe04a"/></linearGradient><linearGradient id="egb3" x1="0" y1="0" x2="0.300" y2="1"><stop offset="0" stop-color="#1595e0"/><stop offset="1" stop-color="#0a6bd0"/></linearGradient><linearGradient id="egc3" x1="0" y1="0" x2="1" y2="1"><stop offset="0" stop-color="#0d62b8"/><stop offset="1" stop-color="#0c4a94"/></linearGradient><mask id="egm3"><circle cx="24" cy="24" r="24" fill="#fff"/><path d="M24 18.500C21 18.500 19 21 19 23.500C19 30 26 36 35 36C39 36 43 35.500 46.500 34.500L47.500 31C43 33.500 38 34 34 33C30 32 27.500 30 27.500 27.500C27.500 26 29.500 25 29.500 23C29.500 20.500 27 18.500 24 18.500Z" fill="#000"/></mask></defs><g mask="url(#egm3)"><circle cx="24" cy="24" r="24" fill="url(#egb3)"/><path d="M19 23.500C15 26 13.500 31 15.500 37C17.500 43 22 47 28 48C37 48 43 43 46.500 35C42 36 38 36.300 35 36C26 36 19 30 19 23.500Z" fill="url(#egc3)"/><path d="M-1 23C2 9 12 -1 24 -1C38 -1 49 10 49 21C49 28 44 33.500 37 33.500C31 33.500 27.500 31 27.500 27.500C27.500 26 29.500 25 29.500 23C29.500 18 25 13.500 19 13.500C11 13.500 3 17 -1 23Z" fill="url(#ega3)"/></g></svg>
<span class="t" style="left:809.50px;top:175px;font-size:15px;color:#000000;letter-spacing:-0.172px;">Front panel</span>
<span class="t" style="left:1108.40px;top:175px;font-size:15px;color:#6d6d6d;letter-spacing:-0.174px;">03/06/2021 13:55</span>
<div class="b" style="left:1280px;top:170px;width:44px;height:30px;overflow:hidden;">
<span class="t" style="left:8.40px;top:5px;font-size:15px;color:#6d6d6d;letter-spacing:0.166px;">Micro</span>
</div>
<div class="b" style="left:761px;top:455px;width:563px;height:19.5px;background:#f0f0f0;"></div>
<div class="b" style="left:782px;top:455px;width:375px;height:19.5px;background:#c9c9c9;"></div>
<svg class="b" style="left:766px;top:459px;" width="7" height="11" viewBox="0 0 7 11"><path d="M6 1L1.500 5.500 6 10" stroke="#505050" stroke-width="1.700" fill="none"/></svg>
<svg class="b" style="left:1309px;top:459px;" width="7" height="11" viewBox="0 0 7 11"><path d="M1 1l4.500 4.500L1 10" stroke="#505050" stroke-width="1.700" fill="none"/></svg>
<div class="b" style="left:560px;top:475px;width:764px;height:152px;background:#f0f0f0;"></div>
<span class="t" style="left:644.40px;top:495px;font-size:15px;color:#000000;letter-spacing:-0.373px;">File name:</span>
<span class="t" style="left:626.30px;top:526px;font-size:15px;color:#000000;letter-spacing:-0.499px;">Save as type:</span>
<div class="b" style="left:717px;top:488px;width:600.5px;height:28px;background:#ffffff;border:1px solid #0078d7;"></div>
<span class="t" style="left:724.00px;top:494px;font-size:15px;color:#000000;letter-spacing:-0.191px;">Side panel</span>
<div class="b" style="left:794px;top:491px;width:1px;height:20px;background:#000;"></div>
<svg class="b" style="left:1301px;top:499px;" width="11" height="7" viewBox="0 0 11 7"><path d="M0.800 0.800L5.500 5.500 10.200 0.800" stroke="#444" stroke-width="1.100" fill="none"/></svg>
<div class="b" style="left:717px;top:519px;width:600.5px;height:28px;background:#e1e1e1;border:1px solid #adadad;"></div>
<span class="t" style="left:721.00px;top:526px;font-size:15px;color:#000000;letter-spacing:-0.310px;">SVG Document</span>
<svg class="b" style="left:1301px;top:530px;" width="11" height="7" viewBox="0 0 11 7"><path d="M0.800 0.800L5.500 5.500 10.200 0.800" stroke="#444" stroke-width="1.100" fill="none"/></svg>
<svg class="b" style="left:573.5px;top:596px;" width="12" height="8" viewBox="0 0 12 8"><path d="M1 7l5-5 5 5" stroke="#333" stroke-width="1.700" fill="none"/></svg>
<span class="t" style="left:594.40px;top:592px;font-size:15px;color:#000000;letter-spacing:-0.137px;">Hide Folders</span>
<div class="b" style="left:1070px;top:580px;width:108px;height:31px;background:#e1e1e1;border:2px solid #0078d7;"></div>
<span class="t" style="left:1108.00px;top:588px;font-size:15px;color:#000000;letter-spacing:-0.801px;">Save</span>
<div class="b" style="left:1195px;top:580px;width:108px;height:31px;background:#e1e1e1;border:1px solid #adadad;"></div>
<span class="t" style="left:1227.00px;top:588px;font-size:15px;color:#000000;letter-spacing:-0.451px;">Cancel</span>
<svg class="b" style="left:1310px;top:614px;" width="12" height="12" viewBox="0 0 12 12"><rect x="8.2" y="0" width="2.700" height="2.700" fill="#b9b9b9"/><rect x="4.1" y="4.1" width="2.700" height="2.700" fill="#b9b9b9"/><rect x="8.2" y="4.1" width="2.700" height="2.700" fill="#b9b9b9"/><rect x="0" y="8.2" width="2.700" height="2.700" fill="#b9b9b9"/><rect x="4.1" y="8.2" width="2.700" height="2.700" fill="#b9b9b9"/><rect x="8.2" y="8.2" width="2.700" height="2.700" fill="#b9b9b9"/></svg>
<div class="b" style="left:559px;top:0px;width:1px;height:628px;background:#5a5a5a;"></div>
<div class="b" style="left:1324px;top:0px;width:1px;height:628px;background:#5a5a5a;"></div>
<div class="b" style="left:559px;top:627px;width:766px;height:1px;background:#5a5a5a;"></div>
<div class="b" style="left:559px;top:0px;width:250px;height:1px;background:#555;"></div>
<div class="b" style="left:809px;top:0px;width:60px;height:1px;background:#0b6fd6;"></div>
<div class="b" style="left:869px;top:0px;width:241px;height:1px;background:#e8e8e8;"></div>
<div class="b" style="left:1110px;top:0px;width:215px;height:1px;background:#555;"></div>
</body></html>
